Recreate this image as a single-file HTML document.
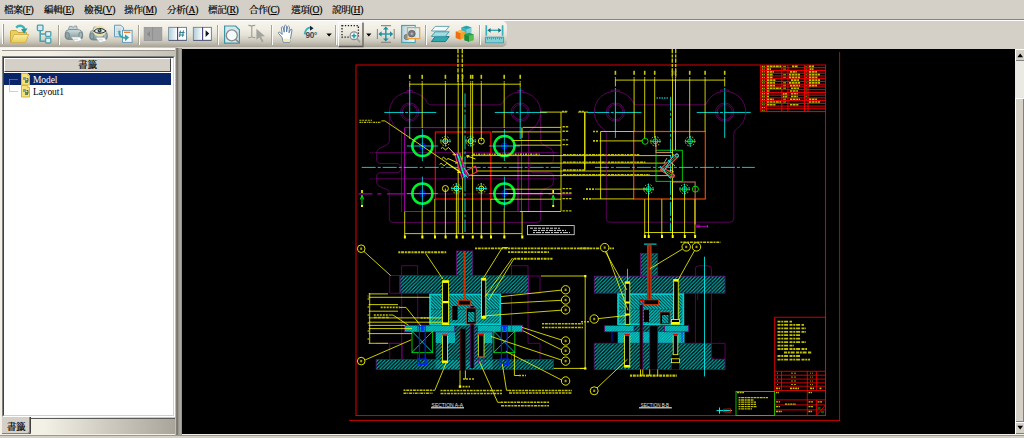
<!DOCTYPE html>
<html lang="zh-Hant"><head><meta charset="utf-8"><title>Viewer</title>
<style>
html,body{margin:0;padding:0}
body{width:1024px;height:438px;overflow:hidden;background:#d4d0c8;position:relative;font-family:"Liberation Serif","Noto Serif CJK SC",serif;font-size:12px;color:#000}
.a{position:absolute}
.mi{position:absolute;top:3px;height:14px;line-height:14px;white-space:nowrap;letter-spacing:-0.3px;font-size:9.6px;-webkit-text-stroke:0.2px #000}
.mi u{text-decoration:underline;text-underline-offset:1px}
#tb{left:0;top:21px;width:507px;height:26px;border-radius:0 5px 5px 0;background:linear-gradient(#f7f5ec 0,#f1eee4 30%,#e4e1d6 55%,#c9c5b9 80%,#a6a296 100%)}
.sep{position:absolute;top:25px;width:1px;height:20px;background:#a8a498;border-right:1px solid #fbfaf5}
#canvas{left:182px;top:49px;width:833px;height:385px;background:#000}
#lp{left:0;top:47px;width:177px;height:387px;background:linear-gradient(90deg,#f3f0e6 0,#f3f0e6 28%,#dad7cc 60%,#c4c1b6 100%)}
#tree{left:2px;top:56px;width:173px;height:361px;background:#fff;border:1px solid #808080;border-right-color:#fff;border-bottom-color:#fff;box-sizing:border-box}
#tree2{left:3px;top:57px;width:171px;height:359px;border:1px solid #404040;border-right-color:#d4d0c8;border-bottom-color:#d4d0c8;box-sizing:border-box}
#hdr{left:4px;top:58px;width:167px;height:14px;background:#d4d0c8;box-sizing:border-box;border-left:1px solid #fff;border-top:1px solid #fff;border-right:1px solid #404040;border-bottom:1px solid #404040;text-align:center;line-height:12px;font-size:9.6px;-webkit-text-stroke:0.2px #000}
#sel{left:4px;top:73px;width:167px;height:12px;background:#0a246a}
.ti{position:absolute;left:33px;height:12px;line-height:12px;font-size:9.5px;letter-spacing:-0.1px}
</style></head><body>
<!-- menu bar -->
<div class="mi" style="left:4px">檔案(<u>F</u>)</div>
<div class="mi" style="left:44px">編輯(<u>E</u>)</div>
<div class="mi" style="left:84px">檢視(<u>V</u>)</div>
<div class="mi" style="left:124px">操作(<u>M</u>)</div>
<div class="mi" style="left:167px">分析(<u>A</u>)</div>
<div class="mi" style="left:208px">標記(<u>R</u>)</div>
<div class="mi" style="left:249px">合作(<u>C</u>)</div>
<div class="mi" style="left:291px">選項(<u>O</u>)</div>
<div class="mi" style="left:332px">說明(<u>H</u>)</div>
<div class="a" style="left:0;top:19px;width:1024px;height:1px;background:#848284"></div>
<div class="a" style="left:0;top:20px;width:1024px;height:1px;background:#fff"></div>
<!-- toolbar -->
<div class="a" id="tb"></div>
<div class="a" style="left:2px;top:24px;width:1px;height:20px;background:#fff;border-right:1px solid #a09c90"></div>
<div class="sep" style="left:58px"></div><div class="sep" style="left:138px"></div><div class="sep" style="left:217px"></div>
<div class="sep" style="left:271px"></div><div class="sep" style="left:335px"></div><div class="sep" style="left:425px"></div><div class="sep" style="left:479px"></div>
<svg class="a" style="left:0;top:0" width="512" height="50" viewBox="0 0 512 50" fill="none">
<defs>
<linearGradient id="gf" x1="0" y1="0" x2="0" y2="1"><stop offset="0" stop-color="#fbeea0"/><stop offset="1" stop-color="#e8cc58"/></linearGradient>
<linearGradient id="gp" x1="0" y1="0" x2="1" y2="0"><stop offset="0" stop-color="#b4d0dc"/><stop offset="1" stop-color="#fdfeff"/></linearGradient>
<linearGradient id="gpr" x1="0" y1="0" x2="0" y2="1"><stop offset="0" stop-color="#d4e0e2"/><stop offset="1" stop-color="#78908c"/></linearGradient>
</defs>
<!-- open folder -->
<path d="M10.5 42.5V31.5q0-1 1-1h5l1.5 2h8.5v3" fill="#e9cf62" stroke="#c9a73c" stroke-width="1"/>
<path d="M10.8 42.6L14 34.5h14.6L25.6 42.6z" fill="url(#gf)" stroke="#d2b048" stroke-width="0.9"/>
<path d="M16.2 27.6C19 24.6 24 25.2 24.6 30" stroke="#3cb4b8" stroke-width="2.4" fill="none"/>
<path d="M21 29.2l6.6-1-3.4 5.6z" fill="#2a9ca4"/>
<!-- tree -->
<path d="M40.2 30.5V41.2H46M40.2 34H46" stroke="#4ca0ac" stroke-width="1.6"/>
<rect x="37.4" y="25.2" width="5.6" height="5.4" rx="0.8" fill="#d4e8f0" stroke="#4ca0ac" stroke-width="1.3"/>
<rect x="45.6" y="31.6" width="5.2" height="4.8" rx="0.8" fill="#e4f0f6" stroke="#4ca0ac" stroke-width="1.3"/>
<rect x="45.6" y="38.2" width="5.2" height="4.8" rx="0.8" fill="#e4f0f6" stroke="#4ca0ac" stroke-width="1.3"/>
<!-- printer -->
<g id="prn"><path d="M68.4 29.6l1-3.2h2.8l.8 1.2 1.4-1.6h2.2l.8 3.6z" fill="#c4d2d6" stroke="#7c9298" stroke-width="0.8"/>
<path d="M65.2 33.6q0-3.6 4-4h8.6q4.6.4 4.8 4.2v3.400q-.2 2-2.600 2.200H68q-2.600-.2-2.800-2.400z" fill="url(#gpr)" stroke="#6a8288" stroke-width="0.8"/>
<ellipse cx="67.4" cy="35.4" rx="2" ry="3.2" fill="#8ea4a8" stroke="#62787e" stroke-width="0.7"/><ellipse cx="80.600" cy="35" rx="1.800" ry="3" fill="#a4b6ba" stroke="#62787e" stroke-width="0.700"/>
<path d="M71.2 37h8.800l2 3.400-7 1.600z" fill="#fbfbfb" stroke="#b0b8bc" stroke-width="0.600"/><path d="M74 39.200h4" stroke="#b8c0c4" stroke-width="0.700"/></g>
<use href="#prn" x="24.600" y="0.600"/>
<ellipse cx="99.600" cy="31" rx="6.400" ry="5.600" fill="#f0e2b0" opacity="0.950"/>
<path d="M93.600 31.200q6-5.600 12.600-.2-6.400 4.600-12.600.2z" fill="#dfe8ea" stroke="#2c2c2c" stroke-width="1"/>
<circle cx="99.600" cy="30.800" r="2" fill="#244c50"/><path d="M98.400 28.600l1.600 2.600" stroke="#6cc0b8" stroke-width="0.900"/>
<!-- copy/convert -->
<path d="M114.500 25.200h6.400l2.600 2.600v9h-9z" fill="#dce8f0" stroke="#6c9cb4" stroke-width="1"/>
<path d="M116 29h5M116 31.500h5M116 34h4" stroke="#b8ccd8" stroke-width="0.800"/>
<rect x="122.500" y="30.400" width="9.600" height="12" fill="#f4fafc" stroke="#6c9cb4" stroke-width="1"/>
<rect x="124" y="31.600" width="6.400" height="1.400" fill="#f08030"/>
<path d="M119.400 30.600c-.6 5.400 2.200 7.600 6.600 7.200" stroke="#38a4ac" stroke-width="2" fill="none"/>
<path d="M125 34.200l4.200 3.400-4.200 3.600z" fill="#38a4ac"/>
<!-- prev (disabled) -->
<rect x="144.200" y="27.400" width="17.600" height="13" fill="#a2a2a2" stroke="#949494" stroke-width="0.800"/>
<path d="M152.600 27.400v13" stroke="#8c8c8c" stroke-width="0.900"/><path d="M150 31l-3.400 3 3.400 3z" fill="#8a8a8a"/>
<!-- page # -->
<rect x="168.700" y="27.400" width="17.800" height="13" fill="#fff" stroke="#6c8498" stroke-width="1"/>
<rect x="169.200" y="27.900" width="8" height="12" fill="url(#gp)"/>
<path d="M177.600 27v14" stroke="#46407c" stroke-width="1.100"/><path d="M169 40.400h17.400" stroke="#586078" stroke-width="1"/>
<path d="M180.400 30.600l-.8 6.400M183.400 30.400l-.8 6.400M179.200 32.600h5.400M178.800 35h5.400" stroke="#2c7c8c" stroke-width="1"/>
<!-- next -->
<rect x="193.400" y="27.400" width="18" height="13" fill="#fff" stroke="#6c8498" stroke-width="1"/>
<rect x="193.900" y="27.900" width="8.400" height="12" fill="url(#gp)"/>
<path d="M202.600 27v14" stroke="#46407c" stroke-width="1.100"/><path d="M193.600 40.400h17.600" stroke="#586078" stroke-width="1"/>
<path d="M205.600 30.200l3.600 3.400-3.600 3.400z" fill="#0c1420"/>
<!-- zoom page -->
<path d="M224.600 26h11l3.800 3.800v13.400h-14.800z" fill="#d4e8ee" stroke="#3c94a0" stroke-width="1.200"/>
<circle cx="231.800" cy="35.400" r="5.500" fill="#f4fafc" stroke="#8a8a8a" stroke-width="1.300"/>
<path d="M236 39.600l3 3" stroke="#8a8a8a" stroke-width="1.600"/>
<!-- text select (disabled) -->
<path d="M248.400 25.400q3 0 3.400 1 .4-1 3.400-1M248.400 37.600q3 0 3.400-1 .4 1 3.400 1M251.800 26.400v10.200" stroke="#9c9c98" stroke-width="1.100"/>
<path d="M256.400 28.800l8.600 7.400-4 .4 2.600 5-1.600.8-2.600-5-3 2.400z" fill="#a2a29e"/>
<!-- hand -->
<path d="M283.400 42.200l-1.400-4.800-3.400-4q-.6-1.400 1-1.200l2.600 2.200-.8-7q.6-1.400 1.800-.2l1 5 .2-6.400q1-1.400 1.900 0l.3 6.200 1-5.400q1-1.200 1.800.2l-.4 6 1.600-3.400q1.200-.8 1.400.6l-1.200 6.800-1 5.400z" fill="#fff" stroke="#5878a0" stroke-width="0.900"/>
<path d="M283.600 41.800l-.8-3h8l-.6 3z" fill="#f4ecb0"/>
<!-- 90 -->
<path d="M304.600 34.400c.6-4.400 3-6.800 6.600-7" stroke="#3cb0b8" stroke-width="1.800" fill="none"/>
<path d="M310 25.800l3.600 2.400-3.600 2.600z" fill="#14283c"/>
<text x="305.400" y="37.900" font-family="Liberation Sans, sans-serif" font-size="8.2" font-weight="bold" fill="#2c4c60" letter-spacing="-0.300">90°</text>
<path d="M326.400 33.400h5.400l-2.700 3.200z" fill="#000"/>
<!-- zoom rect button -->
<rect x="338.500" y="22.500" width="24.500" height="24" fill="none" stroke="#fff" stroke-width="1"/>
<path d="M338.500 46.500h24.500v-24" stroke="#5c5a54" stroke-width="1.400"/>
<rect x="342" y="25.600" width="16.400" height="11.600" stroke="#1c1c1c" stroke-width="1.300" stroke-dasharray="1.300 1.600"/>
<circle cx="354" cy="35.800" r="3.900" fill="#f0f8fa" stroke="#8c8c90" stroke-width="1.200"/>
<path d="M351.600 35.800h4.800M354 33.400v4.800" stroke="#20a0a8" stroke-width="1.500"/><path d="M357 38.800l3 3.400" stroke="#9c9ca0" stroke-width="1.700"/>
<path d="M366.200 33.400h5.200l-2.600 3.200z" fill="#000"/>
<!-- 4 arrows -->
<path d="M377.400 29v10M394.200 29v10M381 25.600h10M381 42.400h10" stroke="#8c8c88" stroke-width="1.100"/>
<path d="M380 34h12M385.800 28v12" stroke="#2c9cac" stroke-width="1.600"/>
<path d="M385.800 26.400l2.800 3.200h-5.600zM385.800 41.600l2.800-3.200h-5.600zM378.400 34l3.200-2.800v5.600zM393.200 34l-3.200-2.800v5.600z" fill="#208c9c"/>
<!-- overlay -->
<rect x="401.600" y="25.500" width="13.600" height="17" fill="url(#gp)" stroke="#4ca4b0" stroke-width="1.200"/>
<circle cx="406.800" cy="37" r="2.700" fill="#8c8c8c" stroke="#6c6c6c" stroke-width="0.700"/>
<rect x="407.500" y="27.600" width="12.200" height="11" fill="#d8ecf4" fill-opacity="0.800" stroke="#f0a030" stroke-width="1.200"/>
<circle cx="411.800" cy="33.700" r="3.400" fill="#7c7c80" stroke="#5c5c60" stroke-width="0.700"/><circle cx="411.800" cy="33.700" r="1.200" fill="#b4b4b8"/>
<!-- layers -->
<path d="M431.400 41.600l3.800-5h14l-3.800 5z" fill="#30a8b0" stroke="#1c7c88" stroke-width="1"/>
<path d="M431.400 36.400l3.800-4.600h14l-3.800 4.600z" fill="#a4dce4" stroke="#3c94a0" stroke-width="0.900"/>
<path d="M431.400 31l3.800-4.600h14l-3.800 4.600z" fill="#f4fafc" stroke="#5c9cac" stroke-width="0.900"/>
<!-- cubes -->
<path d="M461.400 27.600l5-1.800 5.200 1.800v5l-5.200 1.400-5-1.400z" fill="#7cd0dc"/><path d="M461.400 27.600l5-1.800 5.200 1.800-5.200 1.600z" fill="#28a4ac"/><path d="M461.400 27.600l5 1.600v5.200l-5-1.800z" fill="#3cb4c0"/>
<path d="M455.800 31.600l4.600-1.400 4.600 1.400v6.400l-4.600 1.600-4.600-1.600z" fill="#f8a028"/><path d="M455.800 31.600l4.600 1.400v6.600l-4.600-1.600z" fill="#f06c14"/><path d="M455.800 31.600l4.600-1.400 4.600 1.400-4.600 1.400z" fill="#fcb854"/>
<path d="M464.400 34.400l4.600-1.600 4.800 1.600v5.800l-4.800 1.600-4.600-1.600z" fill="#54bc50"/><path d="M464.400 34.400l4.600 1.400v6l-4.600-1.600z" fill="#1c8c3c"/><path d="M464.400 34.400l4.600-1.600 4.800 1.600-4.800 1.400z" fill="#2c9c48"/>
<!-- measure -->
<path d="M486.300 25.200v10.600M502.600 25.200v10.600" stroke="#3cb0bc" stroke-width="1.700"/>
<path d="M489 30.300h11" stroke="#30a8b4" stroke-width="1.400"/><path d="M487.400 30.300l3.200-2.400v4.800zM501.500 30.300l-3.200-2.400v4.800z" fill="#1c6c80"/>
<rect x="485.400" y="37.200" width="18.200" height="5.600" fill="#84d0d8" stroke="#3ca4b0" stroke-width="1"/>
<path d="M487.500 37.600v2M489.500 37.600v1.400M491.500 37.600v2M493.500 37.600v1.400M495.500 37.600v2M497.500 37.600v1.400M499.500 37.600v2M501.500 37.600v1.400" stroke="#2c7c8c" stroke-width="0.700"/>
</svg>

<!-- left panel -->
<div class="a" id="lp"></div>
<div class="a" style="left:0;top:48px;width:177px;height:2px;background:#fbfaf6"></div><div class="a" style="left:2px;top:50px;width:174px;height:1px;background:#9a968c"></div>
<div class="a" id="tree"></div><div class="a" id="tree2"></div>
<div class="a" id="hdr">書籤</div>
<div class="a" id="sel"></div>
<div class="ti" style="top:73.5px;color:#fff">Model</div>
<div class="ti" style="top:85.5px">Layout1</div>
<!-- tree lines + icons -->
<svg class="a" style="left:0;top:70px" width="40" height="30" viewBox="0 70 40 30">
<path d="M9.5 79.5H18M9.5 79.5V91.5H18" stroke="#a0a0a0" stroke-width="1" stroke-dasharray="1 1" fill="none"/>
<g id="pg"><path d="M21.5 73.5h6l2 2v9.5h-8z" fill="#f6e27a" stroke="#d9b23c" stroke-width="1"/><path d="M27.5 73.5v2h2" fill="#fff8c8" stroke="#d9b23c" stroke-width="0.8"/><rect x="23" y="77" width="3" height="3" fill="#7aa0b8"/><rect x="25" y="80" width="3" height="3" fill="#5a8a60"/><path d="M26.5 78.5h1.5v3" stroke="#404040" stroke-width="0.8" fill="none"/></g>
<use href="#pg" y="12"/>
</svg>
<!-- tab strip -->
<div class="a" style="left:0;top:418px;width:177px;height:16px;background:linear-gradient(90deg,#f3f0e6 0,#f3f0e6 25%,#cfcbc0 60%,#a8a49a 100%)"></div>
<div class="a" style="left:30px;top:418px;width:147px;height:1px;background:#5a5a5a"></div>
<div class="a" style="left:2px;top:417px;width:28px;height:17px;background:#d4d0c8;border-right:1px solid #404040;border-bottom:1px solid #404040;border-radius:0 0 3px 2px;box-shadow:inset -1px -1px 0 #808080;text-align:center;line-height:19px;font-size:9.6px;letter-spacing:-0.3px;-webkit-text-stroke:0.2px #000">書籤</div>
<div class="a" style="left:0;top:434px;width:1024px;height:1px;background:#f3f0e6"></div>
<div class="a" style="left:0;top:435px;width:1024px;height:1px;background:#9c988e"></div>
<div class="a" style="left:0;top:436px;width:1024px;height:2px;background:#d4d0c8"></div>
<!-- splitter -->
<div class="a" style="left:175px;top:48px;width:7px;height:387px;background:linear-gradient(90deg,#dedbd2 0,#807d75 22%,#77746c 34%,#a29f96 55%,#aeaba2 78%,#8a877f 100%)"></div>
<!-- canvas -->
<div class="a" id="canvas"></div>
<svg width="1024" height="438" viewBox="0 0 1024 438" style="position:absolute;left:0;top:0" fill="none" font-family="Liberation Sans, sans-serif"><defs>
<pattern id="h1" width="3.6" height="3.6" patternUnits="userSpaceOnUse"><path d="M-1 1L1 -1M-1 4.6L4.6 -1M2.6 4.6L4.6 2.6" stroke="#00b4b4" stroke-width="1.15"/></pattern>
<pattern id="h2" width="3.2" height="3.2" patternUnits="userSpaceOnUse"><rect width="3.2" height="3.2" fill="#003434"/><path d="M-1 -1L4.2 4.2M-1 2.2L1 4.2M2.2 -1L4.2 1" stroke="#00d4d4" stroke-width="1.2"/></pattern>
<pattern id="h2b" width="3.2" height="3.2" patternUnits="userSpaceOnUse"><rect width="3.2" height="3.2" fill="#003434"/><path d="M-1 1L1 -1M-1 4.2L4.2 -1M2.2 4.2L4.2 2.2" stroke="#00d4d4" stroke-width="1.2"/></pattern>
<pattern id="h3" width="2.6" height="2.6" patternUnits="userSpaceOnUse"><rect width="2.6" height="2.6" fill="#005050"/><path d="M-1 1L1 -1M-1 3.6L3.6 -1M1.6 3.6L3.6 1.6" stroke="#00e0e0" stroke-width="1.2"/></pattern>
</defs><rect x="356" y="65" width="469.6" height="350.6" stroke="#ff0000" stroke-width="0.88" fill="none"/>
<path d="M349 420.4L840.1 420.4" stroke="#ff0000" stroke-width="0.8"/>
<path d="M839.6 52L839.6 420.9" stroke="#ff0000" stroke-width="0.8"/>
<circle cx="409.7" cy="112.1" r="9.1" stroke="#7c007c" stroke-width="0.72" fill="none"/>
<circle cx="409.7" cy="112.1" r="7.5" stroke="#7c007c" stroke-width="0.72" fill="none"/>
<circle cx="520.2" cy="112.1" r="9.1" stroke="#7c007c" stroke-width="0.72" fill="none"/>
<circle cx="520.2" cy="112.1" r="7.5" stroke="#7c007c" stroke-width="0.72" fill="none"/>
<path d="M426.2 100.6 A20.3 20.3 0 0 0 389.3 112.3 L389.3 141 C389.3 147 376.7 146 376.7 153 L376.7 160 Q376.7 163.5 381 163.5 L396.5 163.5 A4.6 4.6 0 0 1 396.5 172.7 L381 172.7 Q376.7 172.7 376.7 176.5 L376.7 182 C376.7 189 389.3 187 389.3 193 L389.3 219 Q389.3 222.4 393 222.4 L465 222.4" stroke="#7c007c" stroke-width="0.72" fill="none"/>
<path d="M389.3 112.3 A20.3 20.3 0 0 0 393.4 124.5 Q397 129 401.5 131.5 L401.5 212" stroke="#7c007c" stroke-width="0.72" fill="none"/>
<path d="M426.2 100.6 Q427.5 104.9 431.5 104.9 L465 104.9" stroke="#7c007c" stroke-width="0.72" fill="none"/>
<path d="M406.8 92.3 L406.8 90.5 L412.3 90.5 L412.3 92.3" stroke="#7c007c" stroke-width="0.72" fill="none"/>
<path d="M503.8 100.6 A20.3 20.3 0 0 1 540.7 112.3 L540.7 141 C540.7 147 553.3 146 553.3 153 L553.3 160 Q553.3 163.5 549 163.5 L533.5 163.5 A4.6 4.6 0 0 0 533.5 172.7 L549 172.7 Q553.3 172.7 553.3 176.5 L553.3 182 C553.3 189 540.7 187 540.7 193 L540.7 219 Q540.7 222.4 537 222.4 L465 222.4" stroke="#7c007c" stroke-width="0.72" fill="none"/>
<path d="M540.7 112.3 A20.3 20.3 0 0 1 536.6 124.5 Q533 129 528.5 131.5 L528.5 212" stroke="#7c007c" stroke-width="0.72" fill="none"/>
<path d="M503.8 100.6 Q502.5 104.9 498.5 104.9 L465 104.9" stroke="#7c007c" stroke-width="0.72" fill="none"/>
<path d="M523.2 92.3 L523.2 90.5 L517.7 90.5 L517.7 92.3" stroke="#7c007c" stroke-width="0.72" fill="none"/>
<path d="M369.8 152.6L560.2 152.6" stroke="#7c007c" stroke-width="0.72" stroke-dasharray="1 1.5 1 1.5 182 1.5 1 1.5 1 0"/>
<path d="M369.8 178.8L560.2 178.8" stroke="#7c007c" stroke-width="0.72" stroke-dasharray="1 1.5 1 1.5 182 1.5 1 1.5 1 0"/>
<path d="M358.4 193.9L404 193.9" stroke="#a000a0" stroke-width="1.44" stroke-dasharray="14 5 4 5.6 20 0"/>
<path d="M521 193.9L571.6 193.9" stroke="#a000a0" stroke-width="1.44" stroke-dasharray="22 5.6 4 5 14 0"/>
<path d="M404 193.9L521 193.9" stroke="#7c007c" stroke-width="0.64"/>
<rect x="404.7" y="127.7" width="116.7" height="83.8" stroke="#d000d0" stroke-width="0.8" fill="none"/>
<path d="M518 155.6L518 211.5" stroke="#d000d0" stroke-width="0.8"/>
<rect x="435.3" y="132" width="55.5" height="67" stroke="#ff0000" stroke-width="1.12" fill="none"/>
<path d="M361.7 167.4L560 167.4" stroke="#00ffff" stroke-width="0.8" stroke-dasharray="14 2 3 2"/>
<path d="M465 93.4L465 232" stroke="#00ffff" stroke-width="0.8" stroke-dasharray="14 2 3 2"/>
<path d="M384.3 112.45L436.3 112.45" stroke="#00ffff" stroke-width="0.8" stroke-dasharray="19.5 1.3 3 1.3 40 0"/>
<path d="M409.7 87.7L409.7 139" stroke="#00ffff" stroke-width="0.8"/>
<path d="M494.8 112.45L546.8 112.45" stroke="#00ffff" stroke-width="0.8" stroke-dasharray="19.5 1.3 3 1.3 40 0"/>
<path d="M520.2 87.7L520.2 139" stroke="#00ffff" stroke-width="0.8"/>
<circle cx="422.4" cy="146" r="10.1" stroke="#00f030" stroke-width="2.5" fill="none"/>
<circle cx="422.4" cy="146" r="2.8" stroke="#0000ff" stroke-width="1.04" fill="none"/>
<circle cx="422.4" cy="146" r="1.2" stroke="#0000ff" stroke-width="0.96" fill="none"/>
<path d="M406.9 146L437.9 146" stroke="#00ffff" stroke-width="0.72"/>
<path d="M422.4 129L422.4 161" stroke="#00ffff" stroke-width="0.72"/>
<circle cx="422.4" cy="193.6" r="10.1" stroke="#00f030" stroke-width="2.5" fill="none"/>
<circle cx="422.4" cy="193.6" r="2.8" stroke="#0000ff" stroke-width="1.04" fill="none"/>
<circle cx="422.4" cy="193.6" r="1.2" stroke="#0000ff" stroke-width="0.96" fill="none"/>
<path d="M406.9 193.6L437.9 193.6" stroke="#00ffff" stroke-width="0.72"/>
<path d="M422.4 176.6L422.4 208.6" stroke="#00ffff" stroke-width="0.72"/>
<circle cx="504.4" cy="146" r="10.1" stroke="#00f030" stroke-width="2.5" fill="none"/>
<circle cx="504.4" cy="146" r="2.8" stroke="#0000ff" stroke-width="1.04" fill="none"/>
<circle cx="504.4" cy="146" r="1.2" stroke="#0000ff" stroke-width="0.96" fill="none"/>
<path d="M488.9 146L519.9 146" stroke="#00ffff" stroke-width="0.72"/>
<path d="M504.4 129L504.4 161" stroke="#00ffff" stroke-width="0.72"/>
<circle cx="504.4" cy="193.6" r="10.1" stroke="#00f030" stroke-width="2.5" fill="none"/>
<circle cx="504.4" cy="193.6" r="2.8" stroke="#0000ff" stroke-width="1.04" fill="none"/>
<circle cx="504.4" cy="193.6" r="1.2" stroke="#0000ff" stroke-width="0.96" fill="none"/>
<path d="M488.9 193.6L519.9 193.6" stroke="#00ffff" stroke-width="0.72"/>
<path d="M504.4 176.6L504.4 208.6" stroke="#00ffff" stroke-width="0.72"/>
<path d="M409.7 84.2L520.2 84.2" stroke="#ffff00" stroke-width="0.8"/>
<path d="M409.7 82.4L409.7 87.5" stroke="#ffff00" stroke-width="0.8"/>
<rect x="408.9" y="74.8" width="1.6" height="4" fill="#c8c800"/>
<rect x="409.1" y="81" width="1.2" height="1" fill="#a0a000"/>
<path d="M422.2 82.4L422.2 128" stroke="#ffff00" stroke-width="0.8"/>
<rect x="421.4" y="74.8" width="1.6" height="4" fill="#c8c800"/>
<rect x="421.6" y="81" width="1.2" height="1" fill="#a0a000"/>
<path d="M445.4 82.4L445.4 141.1" stroke="#ffff00" stroke-width="0.8"/>
<rect x="444.6" y="74.8" width="1.6" height="4" fill="#c8c800"/>
<rect x="444.8" y="81" width="1.2" height="1" fill="#a0a000"/>
<path d="M458.2 82.4L458.2 233.6" stroke="#ffff00" stroke-width="0.8"/>
<rect x="457.4" y="74.8" width="1.6" height="4" fill="#c8c800"/>
<rect x="457.6" y="81" width="1.2" height="1" fill="#a0a000"/>
<path d="M462.6 82.4L462.6 233.6" stroke="#ffff00" stroke-width="0.8"/>
<rect x="461.8" y="74.8" width="1.6" height="4" fill="#c8c800"/>
<rect x="462" y="81" width="1.2" height="1" fill="#a0a000"/>
<path d="M470.7 82.4L470.7 141.1" stroke="#ffff00" stroke-width="0.8"/>
<rect x="469.9" y="74.8" width="1.6" height="4" fill="#c8c800"/>
<rect x="470.1" y="81" width="1.2" height="1" fill="#a0a000"/>
<path d="M472.6 82.4L472.6 233.6" stroke="#ffff00" stroke-width="0.8"/>
<rect x="471.8" y="74.8" width="1.6" height="4" fill="#c8c800"/>
<rect x="472" y="81" width="1.2" height="1" fill="#a0a000"/>
<path d="M481.3 82.4L481.3 141.1" stroke="#ffff00" stroke-width="0.8"/>
<rect x="480.5" y="74.8" width="1.6" height="4" fill="#c8c800"/>
<rect x="480.7" y="81" width="1.2" height="1" fill="#a0a000"/>
<path d="M504.2 82.4L504.2 128" stroke="#ffff00" stroke-width="0.8"/>
<rect x="503.4" y="74.8" width="1.6" height="4" fill="#c8c800"/>
<rect x="503.6" y="81" width="1.2" height="1" fill="#a0a000"/>
<path d="M520.2 82.4L520.2 87.5" stroke="#ffff00" stroke-width="0.8"/>
<rect x="519.4" y="74.8" width="1.6" height="4" fill="#c8c800"/>
<rect x="519.6" y="81" width="1.2" height="1" fill="#a0a000"/>
<path d="M458 49L458 82.2" stroke="#c4c400" stroke-width="1.42" stroke-dasharray="4.2 1.3 3 1.1"/>
<path d="M462.3 49L462.3 82.2" stroke="#c4c400" stroke-width="1.42" stroke-dasharray="4.2 1.3 3 1.1"/>
<path d="M404.7 233.6L522.1 233.6" stroke="#ffff00" stroke-width="0.8"/>
<path d="M404.7 211.5L404.7 238" stroke="#ffff00" stroke-width="0.8"/>
<path d="M422.2 208.5L422.2 238" stroke="#ffff00" stroke-width="0.8"/>
<path d="M504.2 208.5L504.2 238" stroke="#ffff00" stroke-width="0.8"/>
<path d="M434.8 199L434.8 238" stroke="#ffff00" stroke-width="0.8"/>
<path d="M445.4 188.5L445.4 238" stroke="#ffff00" stroke-width="0.8"/>
<path d="M456.4 188.5L456.4 238" stroke="#ffff00" stroke-width="0.8"/>
<path d="M481.3 188.5L481.3 238" stroke="#ffff00" stroke-width="0.8"/>
<path d="M490.8 199L490.8 238" stroke="#ffff00" stroke-width="0.8"/>
<path d="M522.1 211.5L522.1 238" stroke="#ffff00" stroke-width="0.8"/>
<rect x="403.9" y="235.5" width="2" height="3" fill="#ffff00"/>
<rect x="421.4" y="235.5" width="2" height="3" fill="#ffff00"/>
<rect x="434" y="235.5" width="2" height="3" fill="#ffff00"/>
<rect x="444.6" y="235.5" width="2" height="3" fill="#ffff00"/>
<rect x="455.6" y="235.5" width="2" height="3" fill="#ffff00"/>
<rect x="461.8" y="235.5" width="2" height="3" fill="#ffff00"/>
<rect x="471.8" y="235.5" width="2" height="3" fill="#ffff00"/>
<rect x="480.5" y="235.5" width="2" height="3" fill="#ffff00"/>
<rect x="490" y="235.5" width="2" height="3" fill="#ffff00"/>
<rect x="503.4" y="235.5" width="2" height="3" fill="#ffff00"/>
<rect x="521.3" y="235.5" width="2" height="3" fill="#ffff00"/>
<path d="M561 112.1L561 211.5" stroke="#ffff00" stroke-width="0.8"/>
<path d="M584.6 112.1L584.6 171" stroke="#ffff00" stroke-width="0.8"/>
<path d="M540 112.1L567 112.1" stroke="#ffff00" stroke-width="0.8"/>
<path d="M578 112.1L588 112.1" stroke="#ffff00" stroke-width="0.8"/>
<path d="M562 111.3L568 111.3" stroke="#c0c000" stroke-width="1.28" stroke-dasharray="2 0.8"/>
<path d="M579 111.3L584 111.3" stroke="#c0c000" stroke-width="1.28" stroke-dasharray="2 0.8"/>
<path d="M522.8 127.4L561 127.4" stroke="#ffff00" stroke-width="0.8"/>
<path d="M492 131.9L561 131.9" stroke="#ffff00" stroke-width="0.8"/>
<path d="M512.5 140.5L561 140.5" stroke="#ffff00" stroke-width="0.8"/>
<path d="M515 145.2L561 145.2" stroke="#ffff00" stroke-width="0.8"/>
<path d="M471.4 155.6L561 155.6" stroke="#ffff00" stroke-width="0.8"/>
<path d="M455 163.1L561 163.1" stroke="#ffff00" stroke-width="0.8"/>
<path d="M476 171L561 171" stroke="#ffff00" stroke-width="0.8"/>
<path d="M470 175.6L561 175.6" stroke="#ffff00" stroke-width="0.8"/>
<path d="M504.6 189.2L561 189.2" stroke="#ffff00" stroke-width="0.8"/>
<path d="M504.6 193.6L561 193.6" stroke="#ffff00" stroke-width="0.8"/>
<path d="M490.8 199.2L561 199.2" stroke="#ffff00" stroke-width="0.8"/>
<path d="M520 211.5L561 211.5" stroke="#ffff00" stroke-width="0.8"/>
<path d="M562.5 126.8L569 126.8" stroke="#c0c000" stroke-width="1.44" stroke-dasharray="2.4 0.9"/>
<path d="M562.5 131.3L569 131.3" stroke="#c0c000" stroke-width="1.44" stroke-dasharray="2.4 0.9"/>
<path d="M562.5 139.9L569 139.9" stroke="#c0c000" stroke-width="1.44" stroke-dasharray="2.4 0.9"/>
<path d="M562.5 144.6L569 144.6" stroke="#c0c000" stroke-width="1.44" stroke-dasharray="2.4 0.9"/>
<path d="M562.5 188.6L572 188.6" stroke="#c0c000" stroke-width="1.44" stroke-dasharray="2.4 0.9"/>
<path d="M562.5 193L572 193" stroke="#c0c000" stroke-width="1.44" stroke-dasharray="2.4 0.9"/>
<path d="M562.5 198.6L572 198.6" stroke="#c0c000" stroke-width="1.44" stroke-dasharray="2.4 0.9"/>
<path d="M562.5 210.9L572 210.9" stroke="#c0c000" stroke-width="1.44" stroke-dasharray="2.4 0.9"/>
<path d="M561 155.6L671 155.6" stroke="#ffff00" stroke-width="0.8"/>
<path d="M563 154.7L640 154.7" stroke="#c0c000" stroke-width="1.6" stroke-dasharray="3.2 0.8 1.6 0.8 2.4 0.8"/>
<path d="M561 163.1L671 163.1" stroke="#ffff00" stroke-width="0.8"/>
<path d="M563 162.2L646 162.2" stroke="#c0c000" stroke-width="1.6" stroke-dasharray="3.2 0.8 1.6 0.8 2.4 0.8"/>
<path d="M561 171L671 171" stroke="#ffff00" stroke-width="0.8"/>
<path d="M563 170.1L585 170.1" stroke="#c0c000" stroke-width="1.6" stroke-dasharray="3.2 0.8 1.6 0.8 2.4 0.8"/>
<path d="M561 175.6L671 175.6" stroke="#ffff00" stroke-width="0.8"/>
<path d="M563 174.7L650 174.7" stroke="#c0c000" stroke-width="1.6" stroke-dasharray="3.2 0.8 1.6 0.8 2.4 0.8"/>
<path d="M522.1 127.6L522.1 137.9" stroke="#ffff00" stroke-width="0.8"/>
<path d="M473 154.3L540 154.3" stroke="#c0c000" stroke-width="1.76" stroke-dasharray="2 1.2 1 1"/>
<circle cx="445.4" cy="141.1" r="2.5" stroke="#ffff00" stroke-width="0.96" fill="none"/>
<circle cx="445.4" cy="141.1" r="4.7" stroke="#e0e000" stroke-width="0.9" stroke-dasharray="1.4 1.55" fill="none"/>
<path d="M439.9 141.1L450.9 141.1" stroke="#00ffff" stroke-width="0.8"/>
<path d="M445.4 135.6L445.4 146.6" stroke="#00ffff" stroke-width="0.8"/>
<circle cx="470.7" cy="141.1" r="2.5" stroke="#ffff00" stroke-width="0.96" fill="none"/>
<circle cx="470.7" cy="141.1" r="4.7" stroke="#e0e000" stroke-width="0.9" stroke-dasharray="1.4 1.55" fill="none"/>
<path d="M465.2 141.1L476.2 141.1" stroke="#00ffff" stroke-width="0.8"/>
<path d="M470.7 135.6L470.7 146.6" stroke="#00ffff" stroke-width="0.8"/>
<circle cx="481.3" cy="141.1" r="3" stroke="#ffff00" stroke-width="0.88" fill="none"/>
<circle cx="445.4" cy="188.5" r="3" stroke="#ffff00" stroke-width="0.88" fill="none"/>
<circle cx="456.4" cy="188.5" r="2.5" stroke="#ffff00" stroke-width="0.96" fill="none"/>
<circle cx="456.4" cy="188.5" r="4.7" stroke="#e0e000" stroke-width="0.9" stroke-dasharray="1.4 1.55" fill="none"/>
<path d="M450.9 188.5L461.9 188.5" stroke="#00ffff" stroke-width="0.8"/>
<path d="M456.4 183L456.4 194" stroke="#00ffff" stroke-width="0.8"/>
<circle cx="481.3" cy="188.5" r="2.5" stroke="#ffff00" stroke-width="0.96" fill="none"/>
<circle cx="481.3" cy="188.5" r="4.7" stroke="#e0e000" stroke-width="0.9" stroke-dasharray="1.4 1.55" fill="none"/>
<path d="M475.8 188.5L486.8 188.5" stroke="#00ffff" stroke-width="0.8"/>
<path d="M481.3 183L481.3 194" stroke="#00ffff" stroke-width="0.8"/>
<path d="M359.4 120.2L372 120.2" stroke="#c0c000" stroke-width="1.12" stroke-dasharray="2 0.8"/>
<path d="M359.4 122.4L381 122.4" stroke="#c0c000" stroke-width="1.12" stroke-dasharray="2 0.8 1 0.8"/>
<path d="M381.4 120.9 L384.9 120.9 L460 171.6" stroke="#ffff00" stroke-width="0.8" fill="none"/>
<path d="M457.2 153.5L464.6 177.5" stroke="#f02868" stroke-width="6.4" stroke-linecap="butt"/>
<path d="M457.4 154.2L464.4 176.8" stroke="#000" stroke-width="3.8"/>
<path d="M456.2 153 L463.8 178 M458.6 153 L466 177" stroke="#ff00ff" stroke-width="0.72" fill="none"/>
<path d="M457.4 154 L464.6 177" stroke="#00ffff" stroke-width="1.28" fill="none"/>
<path d="M459 158 L462.5 170 M460.5 156 L462 160" stroke="#00f000" stroke-width="1.04" fill="none"/>
<path d="M466.5 170.5 L475.5 166.3 L477.2 171.8 L468.5 176 Z" stroke="#f02868" stroke-width="1.12" fill="none"/>
<path d="M462 172 L468 178 M464 168 L470 176" stroke="#00ffff" stroke-width="0.8" fill="none"/>
<path d="M441 148.6 q1.5 -2.5 3 0 t3 0 t3 0.5 L455.6 155 M453.2 152.6 L455.6 155 L452.6 154.6" stroke="#ffff00" stroke-width="0.88" fill="none"/>
<path d="M439.6 164.5 q1.5 -2.5 3 0 t3 0 t3 0 L460.4 172.5 M457.6 170.4 L460.4 172.5 L457.2 172.4" stroke="#ffff00" stroke-width="0.88" fill="none"/>
<path d="M442 158.5 q1.5 -2.5 3 0 t3 0 L458 163" stroke="#ffff00" stroke-width="0.88" fill="none"/>
<path d="M466.7 155.8 L475.5 159 M468 158 L466.7 155.8 L469.4 155.4" stroke="#ffff00" stroke-width="0.88" fill="none"/>
<path d="M362 205.5 L362 196 M360.4 199.5 L362 195 L363.6 199.5" stroke="#00ff20" stroke-width="0.88" fill="none"/>
<rect x="361.2" y="190" width="1.6" height="3" fill="#ffff00"/>
<rect x="361" y="205" width="2" height="2" fill="#ffff00"/>
<path d="M553.2 205.5 L553.2 196 M551.6 199.5 L553.2 195 L554.8 199.5" stroke="#00ff20" stroke-width="0.88" fill="none"/>
<rect x="552.4" y="190" width="1.6" height="3" fill="#ffff00"/>
<rect x="552.2" y="205" width="2" height="2" fill="#ffff00"/>
<rect x="527.4" y="225.6" width="46.8" height="9.1" stroke="#e0e0e0" stroke-width="0.8" fill="none"/>
<path d="M530 228.2L560 228.2" stroke="#e0e0e0" stroke-width="0.96" stroke-dasharray="3 1"/>
<path d="M533 230.4L566 230.4" stroke="#e0e0e0" stroke-width="0.96" stroke-dasharray="4 1 2 1"/>
<path d="M533 232.6L570 232.6" stroke="#e0e0e0" stroke-width="0.96" stroke-dasharray="2 1 5 1"/>
<circle cx="615.4" cy="112.1" r="9.1" stroke="#7c007c" stroke-width="0.72" fill="none"/>
<circle cx="615.4" cy="112.1" r="7.5" stroke="#7c007c" stroke-width="0.72" fill="none"/>
<path d="M587.4 112.45L641.4 112.45" stroke="#00ffff" stroke-width="0.8" stroke-dasharray="22 1.3 3 1.3 40 0"/>
<path d="M615.4 88L615.4 137.9" stroke="#00ffff" stroke-width="0.8"/>
<circle cx="724.7" cy="112.1" r="9.1" stroke="#7c007c" stroke-width="0.72" fill="none"/>
<circle cx="724.7" cy="112.1" r="7.5" stroke="#7c007c" stroke-width="0.72" fill="none"/>
<path d="M696.7 112.45L750.7 112.45" stroke="#00ffff" stroke-width="0.8" stroke-dasharray="22 1.3 3 1.3 40 0"/>
<path d="M724.7 88L724.7 137.9" stroke="#00ffff" stroke-width="0.8"/>
<path d="M636 104.8 L704 104.8" stroke="#7c007c" stroke-width="0.72" fill="none"/>
<path d="M636 104.8 Q633.5 104.8 633 102 A20.6 20.6 0 1 0 603.5 129 Q606.3 131 606.3 134 L606.3 218.8 Q606.3 222.2 609.8 222.2 L730 222.2 Q733.8 222.2 733.8 218.5 L733.8 134 Q733.8 131 736.5 129 A20.6 20.6 0 1 0 707 102 Q706.5 104.8 704 104.8" stroke="#7c007c" stroke-width="0.72" fill="none"/>
<path d="M611.2 91.5 L611.2 90 L619.6 90 L619.6 91.5" stroke="#7c007c" stroke-width="0.72" fill="none"/>
<path d="M720.5 91.5 L720.5 90 L728.9 90 L728.9 91.5" stroke="#7c007c" stroke-width="0.72" fill="none"/>
<rect x="633.7" y="131.5" width="71.6" height="67.5" stroke="#e84800" stroke-width="1.2" fill="none"/>
<rect x="656" y="150.2" width="26.3" height="31.1" stroke="#00f000" stroke-width="0.8" fill="none"/>
<path d="M656 142 L656 152.6 L672.7 152.6" stroke="#d07868" stroke-width="1.04" fill="none"/>
<path d="M672.7 182.1 L695.1 182.1 L695.1 224.5" stroke="#d07868" stroke-width="1.04" fill="none"/>
<path d="M594.9 167.4L754.8 167.4" stroke="#00ffff" stroke-width="0.8" stroke-dasharray="14 2 3 2"/>
<path d="M670.6 96.8L670.6 231.3" stroke="#00ffff" stroke-width="0.8" stroke-dasharray="14 2 3 2"/>
<path d="M656.5 98L668 98" stroke="#00ffff" stroke-width="1.12" stroke-dasharray="1.5 1"/>
<path d="M615.4 80.1L724.7 80.1" stroke="#ffff00" stroke-width="0.8"/>
<path d="M615.4 78.3L615.4 86.5" stroke="#ffff00" stroke-width="0.8"/>
<rect x="614.6" y="70.8" width="1.6" height="4" fill="#c8c800"/>
<rect x="614.8" y="77" width="1.2" height="1" fill="#a0a000"/>
<path d="M634.1 78.3L634.1 131.5" stroke="#ffff00" stroke-width="0.8"/>
<rect x="633.3" y="70.8" width="1.6" height="4" fill="#c8c800"/>
<rect x="633.5" y="77" width="1.2" height="1" fill="#a0a000"/>
<path d="M644.7 78.3L644.7 138" stroke="#ffff00" stroke-width="0.8"/>
<rect x="643.9" y="70.8" width="1.6" height="4" fill="#c8c800"/>
<rect x="644.1" y="77" width="1.2" height="1" fill="#a0a000"/>
<path d="M654.7 78.3L654.7 138" stroke="#ffff00" stroke-width="0.8"/>
<rect x="653.9" y="70.8" width="1.6" height="4" fill="#c8c800"/>
<rect x="654.1" y="77" width="1.2" height="1" fill="#a0a000"/>
<path d="M672.5 78.3L672.5 236" stroke="#ffff00" stroke-width="0.8"/>
<rect x="671.7" y="70.8" width="1.6" height="4" fill="#c8c800"/>
<rect x="671.9" y="77" width="1.2" height="1" fill="#a0a000"/>
<path d="M675.5 78.3L675.5 150" stroke="#ffff00" stroke-width="0.8"/>
<rect x="674.7" y="70.8" width="1.6" height="4" fill="#c8c800"/>
<rect x="674.9" y="77" width="1.2" height="1" fill="#a0a000"/>
<path d="M689.7 78.3L689.7 138" stroke="#ffff00" stroke-width="0.8"/>
<rect x="688.9" y="70.8" width="1.6" height="4" fill="#c8c800"/>
<rect x="689.1" y="77" width="1.2" height="1" fill="#a0a000"/>
<path d="M705.1 78.3L705.1 131.5" stroke="#ffff00" stroke-width="0.8"/>
<rect x="704.3" y="70.8" width="1.6" height="4" fill="#c8c800"/>
<rect x="704.5" y="77" width="1.2" height="1" fill="#a0a000"/>
<path d="M724.7 78.3L724.7 86.5" stroke="#ffff00" stroke-width="0.8"/>
<rect x="723.9" y="70.8" width="1.6" height="4" fill="#c8c800"/>
<rect x="724.1" y="77" width="1.2" height="1" fill="#a0a000"/>
<path d="M672.3 49L672.3 78" stroke="#c4c400" stroke-width="1.42" stroke-dasharray="4.2 1.3 3 1.1"/>
<path d="M675.7 49L675.7 78" stroke="#c4c400" stroke-width="1.42" stroke-dasharray="4.2 1.3 3 1.1"/>
<path d="M585 112.1L585 169.7" stroke="#ffff00" stroke-width="0.8"/>
<path d="M600.6 131.5L600.6 198.9" stroke="#ffff00" stroke-width="0.8"/>
<path d="M600.6 131.5L633.7 131.5" stroke="#ffff00" stroke-width="0.8"/>
<path d="M599.4 140.9L642.8 140.9" stroke="#ffff00" stroke-width="0.8"/>
<path d="M593 131.5L599 131.5" stroke="#c0c000" stroke-width="1.6" stroke-dasharray="2 1"/>
<path d="M593 140.9L599 140.9" stroke="#c0c000" stroke-width="1.6" stroke-dasharray="2 1"/>
<path d="M594.9 189.1L648.5 189.1" stroke="#ffff00" stroke-width="0.8"/>
<path d="M591.4 198.9L633.7 198.9" stroke="#ffff00" stroke-width="0.8"/>
<path d="M586 189.1L594 189.1" stroke="#c0c000" stroke-width="1.6" stroke-dasharray="2 1"/>
<path d="M583 198.9L591 198.9" stroke="#c0c000" stroke-width="1.6" stroke-dasharray="2 1"/>
<path d="M644.7 232.5L694.9 232.5" stroke="#ffff00" stroke-width="0.8"/>
<path d="M644.7 199.2L644.7 236" stroke="#ffff00" stroke-width="0.8"/>
<rect x="643.9" y="235" width="2" height="3" fill="#ffff00"/>
<path d="M648.5 192L648.5 236" stroke="#ffff00" stroke-width="0.8"/>
<rect x="647.7" y="235" width="2" height="3" fill="#ffff00"/>
<path d="M661.8 199.2L661.8 236" stroke="#ffff00" stroke-width="0.8"/>
<rect x="661" y="235" width="2" height="3" fill="#ffff00"/>
<path d="M672.5 182L672.5 236" stroke="#ffff00" stroke-width="0.8"/>
<rect x="671.7" y="235" width="2" height="3" fill="#ffff00"/>
<path d="M684.6 192L684.6 236" stroke="#ffff00" stroke-width="0.8"/>
<rect x="683.8" y="235" width="2" height="3" fill="#ffff00"/>
<path d="M694.9 199.2L694.9 236" stroke="#ffff00" stroke-width="0.8"/>
<rect x="694.1" y="235" width="2" height="3" fill="#ffff00"/>
<circle cx="645.1" cy="141.3" r="3" stroke="#00f000" stroke-width="0.88" fill="none"/>
<circle cx="655.4" cy="141.3" r="2.5" stroke="#00f000" stroke-width="0.96" fill="none"/>
<circle cx="655.4" cy="141.3" r="4.7" stroke="#e0e000" stroke-width="0.9" stroke-dasharray="1.4 1.55" fill="none"/>
<path d="M649.9 141.3L660.9 141.3" stroke="#00ffff" stroke-width="0.8"/>
<path d="M655.4 135.8L655.4 146.8" stroke="#00ffff" stroke-width="0.8"/>
<circle cx="690.1" cy="141.3" r="2.5" stroke="#00f000" stroke-width="0.96" fill="none"/>
<circle cx="690.1" cy="141.3" r="4.7" stroke="#e0e000" stroke-width="0.9" stroke-dasharray="1.4 1.55" fill="none"/>
<path d="M684.6 141.3L695.6 141.3" stroke="#00ffff" stroke-width="0.8"/>
<path d="M690.1 135.8L690.1 146.8" stroke="#00ffff" stroke-width="0.8"/>
<circle cx="648.5" cy="189.1" r="2.5" stroke="#00f000" stroke-width="0.96" fill="none"/>
<circle cx="648.5" cy="189.1" r="4.7" stroke="#e0e000" stroke-width="0.9" stroke-dasharray="1.4 1.55" fill="none"/>
<path d="M643 189.1L654 189.1" stroke="#00ffff" stroke-width="0.8"/>
<path d="M648.5 183.6L648.5 194.6" stroke="#00ffff" stroke-width="0.8"/>
<circle cx="684.6" cy="189.1" r="2.5" stroke="#00f000" stroke-width="0.96" fill="none"/>
<circle cx="684.6" cy="189.1" r="4.7" stroke="#e0e000" stroke-width="0.9" stroke-dasharray="1.4 1.55" fill="none"/>
<path d="M679.1 189.1L690.1 189.1" stroke="#00ffff" stroke-width="0.8"/>
<path d="M684.6 183.6L684.6 194.6" stroke="#00ffff" stroke-width="0.8"/>
<circle cx="695.4" cy="189.1" r="3" stroke="#00f000" stroke-width="0.88" fill="none"/>
<path d="M676.7 155.8L662.4 169.3L672.7 175.7" stroke="#e04848" stroke-width="4.6" stroke-linecap="round" stroke-linejoin="round"/>
<path d="M676.7 155.8L662.4 169.3L672.7 175.7" stroke="#000" stroke-width="2.2" stroke-linecap="round" stroke-linejoin="round"/>
<path d="M676.7 155.8 L662.4 169.3 L672.7 175.7" stroke="#00f000" stroke-width="0.88" fill="none"/>
<path d="M674 154 L664 171 M668 160 L675 166 M660 166 L670 178" stroke="#00ffff" stroke-width="0.88" fill="none"/>
<circle cx="676.9" cy="155.6" r="1.6" stroke="#00ffff" stroke-width="0.8" fill="none"/>
<circle cx="662.6" cy="169.3" r="1.4" stroke="#d07868" stroke-width="0.96" fill="none"/>
<circle cx="672.5" cy="175.5" r="1.3" stroke="#d07868" stroke-width="0.96" fill="none"/>
<path d="M667 158 L664 163 M670 170 L674 172" stroke="#e0e0e0" stroke-width="0.72" fill="none"/>
<path d="M696.5 226.3 L708 226.3 M697 224.5 L697 228 M699 224.5 L699 228 M707.5 225 L707.5 227.6" stroke="#ff00ff" stroke-width="0.72" fill="none"/>
<rect x="399.9" y="275.6" width="128.6" height="17.6" fill="url(#h1)"/>
<rect x="456.5" y="251" width="16.3" height="24.6" fill="url(#h1)"/>
<rect x="429.1" y="293.6" width="72" height="15.9" fill="url(#h2)"/>
<rect x="429.1" y="309.5" width="72" height="15.8" fill="url(#h2b)"/>
<rect x="404.4" y="325.2" width="50.4" height="6.7" fill="url(#h3)"/>
<rect x="477.5" y="325.2" width="44.9" height="6.7" fill="url(#h3)"/>
<rect x="454.8" y="325.2" width="22.7" height="6.7" fill="url(#h1)"/>
<rect x="435.6" y="331.9" width="19.4" height="11.1" fill="url(#h3)"/>
<rect x="477.5" y="331.9" width="15" height="11.1" fill="url(#h3)"/>
<rect x="455" y="331.9" width="22.5" height="11.1" fill="url(#h1)"/>
<rect x="435.6" y="343" width="56.9" height="26.5" fill="url(#h1)"/>
<rect x="376.1" y="359.4" width="177.6" height="10.1" fill="url(#h1)"/>
<rect x="399.9" y="275.6" width="128.6" height="17.6" stroke="#7c007c" stroke-width="0.72" fill="none"/>
<rect x="456.5" y="251" width="16.3" height="24.6" stroke="#7c007c" stroke-width="0.72" fill="none"/>
<rect x="376.1" y="359.4" width="177.6" height="10.1" stroke="#7c007c" stroke-width="0.72" fill="none"/>
<rect x="404.4" y="325.2" width="50.4" height="6.7" stroke="#7c007c" stroke-width="0.72" fill="none"/>
<rect x="477.5" y="325.2" width="44.9" height="6.7" stroke="#7c007c" stroke-width="0.72" fill="none"/>
<rect x="430.1" y="294.5" width="70.2" height="29.8" stroke="#00cccc" stroke-width="1.6" fill="none"/>
<rect x="401.7" y="265.8" width="16" height="9.8" stroke="#7c007c" stroke-width="0.72" fill="none"/>
<path d="M401.7 293.2L401.7 359.4" stroke="#7c007c" stroke-width="0.72"/>
<path d="M417.7 293.2L417.7 359.4" stroke="#7c007c" stroke-width="0.72"/>
<rect x="389.8" y="275.6" width="10.1" height="17.6" stroke="#7c007c" stroke-width="0.72" fill="none"/>
<rect x="389.8" y="343.3" width="12.3" height="16.1" stroke="#7c007c" stroke-width="0.72" fill="none"/>
<rect x="511.4" y="265.8" width="16.6" height="9.8" stroke="#7c007c" stroke-width="0.72" fill="none"/>
<path d="M511.4 293.2L511.4 359.4" stroke="#7c007c" stroke-width="0.72"/>
<path d="M528 293.2L528 343.3" stroke="#7c007c" stroke-width="0.72"/>
<rect x="528.5" y="276" width="11.5" height="17.2" stroke="#7c007c" stroke-width="0.72" fill="none"/>
<path d="M528 343.3 L540 343.3 L540 359.4" stroke="#7c007c" stroke-width="0.72" fill="none"/>
<path d="M376.1 343.3L402 343.3" stroke="#7c007c" stroke-width="0.72"/>
<rect x="463.6" y="251" width="2" height="51" fill="#d03000"/>
<rect x="458.4" y="300.3" width="11.8" height="4.7" stroke="#d03000" stroke-width="0.88" fill="#000"/>
<rect x="460.2" y="328.8" width="5.4" height="41.7" fill="#000"/>
<path d="M460.2 328.8L460.2 370.5" stroke="#900000" stroke-width="0.72"/>
<path d="M465.6 328.8L465.6 370.5" stroke="#900000" stroke-width="0.72"/>
<rect x="470.3" y="306" width="3.7" height="62" fill="#000"/>
<path d="M470.3 306L470.3 368" stroke="#7c007c" stroke-width="0.72"/>
<path d="M474 306L474 368" stroke="#7c007c" stroke-width="0.72"/>
<rect x="466.5" y="308" width="9.5" height="16" fill="#000"/>
<rect x="466.5" y="308" width="9.5" height="16" stroke="#b05030" stroke-width="0.72" fill="none"/>
<rect x="468" y="312" width="6.5" height="10" fill="url(#h2)"/>
<rect x="452" y="306" width="5.5" height="14" fill="#000"/>
<path d="M452 306L452 320" stroke="#b05030" stroke-width="0.72"/>
<rect x="442.6" y="280.7" width="6" height="43.9" fill="#000"/>
<rect x="442.6" y="280.7" width="6" height="43.9" stroke="#ffff00" stroke-width="0.8" fill="none"/>
<rect x="442.6" y="280.7" width="6" height="2.2" fill="#ffff00"/>
<rect x="442.6" y="301" width="6" height="2.2" fill="#ffff00"/>
<rect x="442.6" y="322.4" width="6" height="2.2" fill="#ffff00"/>
<rect x="481.6" y="278.4" width="4.2" height="39.9" fill="#000"/>
<rect x="481.6" y="278.4" width="4.2" height="39.9" stroke="#ffff00" stroke-width="0.8" fill="none"/>
<rect x="481.6" y="278.4" width="4.2" height="2.2" fill="#ffff00"/>
<rect x="481.6" y="316" width="4.2" height="2.2" fill="#ffff00"/>
<rect x="442.4" y="335.3" width="5.2" height="27.4" fill="#000"/>
<rect x="442.4" y="335.3" width="5.2" height="27.4" stroke="#ffff00" stroke-width="0.8" fill="none"/>
<rect x="442.4" y="360.5" width="5.2" height="2.2" fill="#ffff00"/>
<rect x="442.4" y="334.3" width="5.2" height="1.7" fill="#e00000"/>
<rect x="478.3" y="334.5" width="5.7" height="22.5" fill="#000"/>
<rect x="478.3" y="334.5" width="5.7" height="22.5" stroke="#ffff00" stroke-width="0.8" fill="none"/>
<rect x="478.3" y="333.6" width="5.7" height="1.7" fill="#e00000"/>
<rect x="478.3" y="357" width="5.7" height="6" stroke="#7c007c" stroke-width="0.72" fill="none"/>
<rect x="412" y="331.3" width="20.6" height="21.1" fill="#000"/>
<rect x="412" y="331.3" width="20.6" height="21.3" stroke="#00c800" stroke-width="0.96" fill="none"/>
<path d="M412 331.3L432.6 352.4" stroke="#00ffff" stroke-width="0.72"/>
<path d="M412 352.4L432.6 331.3" stroke="#00ffff" stroke-width="0.72"/>
<rect x="419.4" y="326" width="5.8" height="37.8" stroke="#0020ff" stroke-width="1.12" fill="none"/>
<rect x="417.7" y="359" width="9.2" height="5.5" stroke="#0020ff" stroke-width="0.96" fill="none"/>
<rect x="420.8" y="325" width="3" height="6" fill="#0030ff"/>
<rect x="493.8" y="331.3" width="21" height="21.1" fill="#000"/>
<rect x="493.8" y="331.3" width="21" height="21.3" stroke="#00c800" stroke-width="0.96" fill="none"/>
<path d="M493.8 331.3L514.8 352.4" stroke="#00ffff" stroke-width="0.72"/>
<path d="M493.8 352.4L514.8 331.3" stroke="#00ffff" stroke-width="0.72"/>
<rect x="501.4" y="326" width="5.8" height="37.8" stroke="#0020ff" stroke-width="1.12" fill="none"/>
<rect x="499.7" y="359" width="9.2" height="5.5" stroke="#0020ff" stroke-width="0.96" fill="none"/>
<rect x="502.8" y="325" width="3" height="6" fill="#0030ff"/>
<path d="M369.7 293L369.7 343.3" stroke="#ffff00" stroke-width="0.8"/>
<path d="M368.6 293.9L388 293.9" stroke="#ffff00" stroke-width="0.8"/>
<path d="M368.6 297.3L430 297.3" stroke="#ffff00" stroke-width="0.8"/>
<path d="M368.6 304.6L398 304.6" stroke="#ffff00" stroke-width="0.8"/>
<path d="M368.6 311.2L398 311.2" stroke="#ffff00" stroke-width="0.8"/>
<path d="M368.6 317.9L443 317.9" stroke="#ffff00" stroke-width="0.8"/>
<path d="M368.6 322.2L443 322.2" stroke="#ffff00" stroke-width="0.8"/>
<path d="M368.6 325.4L405 325.4" stroke="#ffff00" stroke-width="0.8"/>
<path d="M368.6 328.6L412 328.6" stroke="#ffff00" stroke-width="0.8"/>
<path d="M368.6 333.6L412 333.6" stroke="#ffff00" stroke-width="0.8"/>
<path d="M368.6 343.3L388 343.3" stroke="#ffff00" stroke-width="0.8"/>
<path d="M367.6 296L369 296" stroke="#c0c000" stroke-width="1.2" stroke-dasharray="1 1"/>
<path d="M368.2 298L368.2 340" stroke="#c4c400" stroke-width="0.9" stroke-dasharray="2 6"/>
<path d="M380.7 307.4L399.9 307.4" stroke="#c0c000" stroke-width="1.76" stroke-dasharray="2 1"/>
<path d="M400 307.4 L406 307.4 L421 326" stroke="#ffff00" stroke-width="0.8" fill="none"/>
<path d="M373.8 315L389 315" stroke="#c0c000" stroke-width="1.6" stroke-dasharray="2 1"/>
<path d="M373.8 317.5L389 317.5" stroke="#c0c000" stroke-width="1.6" stroke-dasharray="3 1"/>
<path d="M389 315 L393 315 L408.5 325.3" stroke="#ffff00" stroke-width="0.8" fill="none"/>
<path d="M398.3 252.3L446.2 252.3" stroke="#c0c000" stroke-width="1.92" stroke-dasharray="2 0.8 3 0.8"/>
<path d="M425.7 253.5L442.8 279" stroke="#ffff00" stroke-width="0.8"/>
<circle cx="361.2" cy="248.7" r="3.8" stroke="#ffff00" stroke-width="0.88" fill="none"/>
<rect x="360.2" y="247.5" width="2" height="2.4" fill="#a0a000"/>
<path d="M364 251.5L390.7 275.6" stroke="#ffff00" stroke-width="0.8"/>
<circle cx="361.2" cy="361.1" r="3.8" stroke="#ffff00" stroke-width="0.88" fill="none"/>
<rect x="360.2" y="359.9" width="2" height="2.4" fill="#a0a000"/>
<path d="M365 360L411.3 339.8" stroke="#ffff00" stroke-width="0.8"/>
<path d="M420.7 317.9L430 317.9" stroke="#c0c000" stroke-width="1.6" stroke-dasharray="2 1"/>
<path d="M475 248.4L590 248.4" stroke="#c0c000" stroke-width="1.76" stroke-dasharray="2 0.8 3 0.8"/>
<path d="M508 252.2L549 252.2" stroke="#c0c000" stroke-width="1.76" stroke-dasharray="2 0.8 3 0.8"/>
<path d="M514.4 258.8L552.5 258.8" stroke="#c0c000" stroke-width="1.92" stroke-dasharray="2 0.8 3 0.8"/>
<path d="M508 247.6 L502.3 247.6 L482.8 279" stroke="#ffff00" stroke-width="0.8" fill="none"/>
<path d="M514.4 258 L488.6 300 M512.5 258 L485 296.6" stroke="#ffff00" stroke-width="0.8" fill="none"/>
<circle cx="565.6" cy="289.8" r="4.2" stroke="#ffff00" stroke-width="0.88" fill="none"/>
<rect x="564.6" y="288.6" width="2" height="2.4" fill="#a0a000"/>
<path d="M561.4 290.1L501 296.6" stroke="#ffff00" stroke-width="0.8"/>
<circle cx="565.6" cy="300" r="4.2" stroke="#ffff00" stroke-width="0.88" fill="none"/>
<rect x="564.6" y="298.8" width="2" height="2.4" fill="#a0a000"/>
<path d="M561.4 300.3L501 303.5" stroke="#ffff00" stroke-width="0.8"/>
<circle cx="565.6" cy="309.9" r="4.2" stroke="#ffff00" stroke-width="0.88" fill="none"/>
<rect x="564.6" y="308.7" width="2" height="2.4" fill="#a0a000"/>
<path d="M561.4 310.2L482.8 316" stroke="#ffff00" stroke-width="0.8"/>
<circle cx="565.6" cy="341" r="4.2" stroke="#ffff00" stroke-width="0.88" fill="none"/>
<rect x="564.6" y="339.8" width="2" height="2.4" fill="#a0a000"/>
<path d="M561.6 340L521.7 327.3" stroke="#ffff00" stroke-width="0.8"/>
<circle cx="565.6" cy="350.8" r="4.2" stroke="#ffff00" stroke-width="0.88" fill="none"/>
<rect x="564.6" y="349.6" width="2" height="2.4" fill="#a0a000"/>
<path d="M561.6 349.8L522.8 330.7" stroke="#ffff00" stroke-width="0.8"/>
<circle cx="565.6" cy="361.1" r="4.2" stroke="#ffff00" stroke-width="0.88" fill="none"/>
<rect x="564.6" y="359.9" width="2" height="2.4" fill="#a0a000"/>
<path d="M561.6 360.1L490.8 336.4" stroke="#ffff00" stroke-width="0.8"/>
<circle cx="565.6" cy="381" r="4.2" stroke="#ffff00" stroke-width="0.88" fill="none"/>
<rect x="564.6" y="379.8" width="2" height="2.4" fill="#a0a000"/>
<path d="M561.6 380L505.7 351.3" stroke="#ffff00" stroke-width="0.8"/>
<path d="M541 276 L585.2 276 L585.2 368.4 L553.7 368.4" stroke="#ffff00" stroke-width="0.8" fill="none"/>
<rect x="584.2" y="367.4" width="2.2" height="2.2" fill="#ffff00"/>
<rect x="584.2" y="275" width="2.2" height="2.2" fill="#ffff00"/>
<path d="M542 323.8L583 323.8" stroke="#c0c000" stroke-width="1.6" stroke-dasharray="2 0.8 3 0.8"/>
<path d="M542 327.5L583 327.5" stroke="#c0c000" stroke-width="1.6" stroke-dasharray="2 0.8 3 0.8"/>
<path d="M581 321.8L589 321.8" stroke="#c0c000" stroke-width="1.6" stroke-dasharray="2 1"/>
<path d="M460 370.5L460 386.6" stroke="#ffff00" stroke-width="0.8"/>
<path d="M465.4 370.5L465.4 379.3" stroke="#ffff00" stroke-width="0.8"/>
<rect x="458.8" y="385.4" width="2.4" height="2.4" fill="#ffff00"/>
<path d="M463 379L475 379" stroke="#c0c000" stroke-width="1.6" stroke-dasharray="2 1"/>
<path d="M462.5 386.6L470 386.6" stroke="#c0c000" stroke-width="1.6" stroke-dasharray="2 1"/>
<path d="M403.5 390.3L432.5 390.3" stroke="#c0c000" stroke-width="1.6" stroke-dasharray="2 0.8 3 0.8"/>
<path d="M403.5 393.3L432.5 393.3" stroke="#c0c000" stroke-width="1.6" stroke-dasharray="3 0.8 1 0.8"/>
<path d="M432.5 390.3 L434.8 390.3 L446.2 362.7" stroke="#ffff00" stroke-width="0.8" fill="none"/>
<path d="M440.5 390.5L502 390.5" stroke="#c0c000" stroke-width="1.6" stroke-dasharray="2 0.8 3 0.8"/>
<path d="M440.5 393.5L502 393.5" stroke="#c0c000" stroke-width="1.6" stroke-dasharray="3 0.8 2 0.8"/>
<path d="M509 390.5L572 390.5" stroke="#c0c000" stroke-width="1.6" stroke-dasharray="2 0.8 3 0.8"/>
<path d="M509 393L572 393" stroke="#c0c000" stroke-width="1.28" stroke-dasharray="3 0.8 2 0.8"/>
<path d="M509 390.3 L506.5 390.3 L502.3 363.8" stroke="#ffff00" stroke-width="0.8" fill="none"/>
<path d="M501 402.3L549 402.3" stroke="#c0c000" stroke-width="1.6" stroke-dasharray="2 0.8 3 0.8"/>
<path d="M501 405.8L549 405.8" stroke="#c0c000" stroke-width="1.6" stroke-dasharray="3 0.8 2 0.8"/>
<path d="M501 402.3 L497.7 402.3 L479.4 361.5" stroke="#ffff00" stroke-width="0.8" fill="none"/>
<path d="M514.4 353.5L514.4 375.5" stroke="#ffff00" stroke-width="0.8"/>
<path d="M514.4 375.5L519 375.5" stroke="#ffff00" stroke-width="0.8"/>
<path d="M519 375.5L526 375.5" stroke="#c0c000" stroke-width="1.6" stroke-dasharray="2 1"/>
<text x="431.6" y="406.6" font-size="5" fill="#e0e0e0" font-weight="normal" textLength="31.5" lengthAdjust="spacingAndGlyphs">SECTION A-A</text>
<rect x="431" y="407.2" width="33" height="1.2" fill="#e0e0e0"/>
<rect x="594.2" y="276.1" width="130.9" height="17.1" fill="url(#h1)"/>
<rect x="640.5" y="253.3" width="17.2" height="22.8" fill="url(#h1)"/>
<rect x="617.2" y="293.2" width="67" height="16.1" fill="url(#h2)"/>
<rect x="617.2" y="309.3" width="67" height="16" fill="url(#h2b)"/>
<rect x="604.7" y="325.6" width="29.3" height="6.2" fill="url(#h3)"/>
<rect x="664.6" y="325.6" width="23.9" height="6.2" fill="url(#h3)"/>
<rect x="634" y="325.6" width="30.6" height="6.2" fill="url(#h1)"/>
<rect x="617.7" y="331.8" width="66.9" height="11.5" fill="url(#h3)"/>
<rect x="594.2" y="343.3" width="117.2" height="26.2" fill="url(#h1)"/>
<rect x="711.4" y="359.2" width="13.7" height="10.3" fill="url(#h1)"/>
<rect x="594.2" y="276.1" width="130.9" height="17.1" stroke="#7c007c" stroke-width="0.72" fill="none"/>
<rect x="640.5" y="253.3" width="17.2" height="22.8" stroke="#7c007c" stroke-width="0.72" fill="none"/>
<rect x="604.7" y="325.6" width="29.3" height="6.2" stroke="#7c007c" stroke-width="0.72" fill="none"/>
<rect x="664.6" y="325.6" width="23.9" height="6.2" stroke="#7c007c" stroke-width="0.72" fill="none"/>
<path d="M594.2 343.3 L711.4 343.3 L711.4 356 Q711.4 359.2 714.6 359.2 L725.1 359.2 L725.1 369.5 L594.2 369.5 Z" stroke="#7c007c" stroke-width="0.72" fill="none"/>
<rect x="618.2" y="294.2" width="65.1" height="30.1" stroke="#00cccc" stroke-width="1.6" fill="none"/>
<path d="M695.4 276.1 L695.4 269 Q695.4 265.8 698.6 265.8 L708.2 265.8 Q711.4 265.8 711.4 269 L711.4 343.3" stroke="#7c007c" stroke-width="0.72" fill="none"/>
<path d="M695.4 293.2L695.4 343.3" stroke="#7c007c" stroke-width="0.72"/>
<path d="M697.7 293.2L697.7 300" stroke="#7c007c" stroke-width="0.72"/>
<path d="M711.4 343.3 L725.1 343.3 L725.1 359.2" stroke="#7c007c" stroke-width="0.72" fill="none"/>
<path d="M704.5 256.7L704.5 376.4" stroke="#00ffff" stroke-width="0.8"/>
<path d="M612 332L612 342" stroke="#0020ff" stroke-width="0.8"/>
<path d="M682 332L682 342" stroke="#0020ff" stroke-width="0.8"/>
<path d="M644 244.1L656.5 244.1" stroke="#00ffff" stroke-width="0.96"/>
<rect x="647" y="244.5" width="4.6" height="55.5" fill="#b43008"/>
<path d="M649.3 246L649.3 299" stroke="#700000" stroke-width="0.64"/>
<rect x="644" y="299.8" width="14.6" height="4.8" stroke="#d03000" stroke-width="0.96" fill="#000"/>
<rect x="639.9" y="305" width="2.9" height="64.5" fill="#000"/>
<path d="M639.9 300L639.9 369.5" stroke="#900000" stroke-width="0.64"/>
<path d="M642.8 300L642.8 369.5" stroke="#7c007c" stroke-width="0.64"/>
<rect x="649.7" y="326" width="8" height="43.5" fill="#000"/>
<path d="M649.7 326L649.7 369.5" stroke="#7c007c" stroke-width="0.64"/>
<path d="M657.7 326L657.7 369.5" stroke="#7c007c" stroke-width="0.64"/>
<rect x="639.4" y="299" width="3.9" height="2" fill="#e00000"/>
<rect x="660" y="312" width="10" height="12" fill="#000"/>
<rect x="660" y="312" width="10" height="12" stroke="#b05030" stroke-width="0.72" fill="none"/>
<rect x="662" y="315" width="6.5" height="8" fill="url(#h2)"/>
<rect x="644" y="310" width="5" height="12" fill="#000"/>
<path d="M627.5 268.8L627.5 281.8" stroke="#00ffff" stroke-width="0.8"/>
<rect x="625.2" y="281.8" width="4.6" height="42.5" fill="#000"/>
<rect x="625.2" y="281.8" width="4.6" height="42.5" stroke="#ffff00" stroke-width="0.8" fill="none"/>
<rect x="625.2" y="281.8" width="4.6" height="2" fill="#ffff00"/>
<rect x="625.2" y="301.5" width="4.6" height="2" fill="#ffff00"/>
<rect x="625.2" y="313.5" width="4.6" height="2" fill="#ffff00"/>
<rect x="673.7" y="279.5" width="4.5" height="40" fill="#000"/>
<rect x="673.7" y="279.5" width="4.5" height="40" stroke="#ffff00" stroke-width="0.8" fill="none"/>
<rect x="673.7" y="279.5" width="4.5" height="2" fill="#ffff00"/>
<rect x="671.4" y="319.5" width="8" height="4.8" fill="#000"/>
<rect x="671.4" y="319.5" width="8" height="4.8" stroke="#ffff00" stroke-width="0.8" fill="none"/>
<rect x="671.4" y="322" width="8" height="2" fill="#ffff00"/>
<rect x="624.6" y="335.3" width="5.2" height="31.9" fill="#000"/>
<rect x="624.6" y="335.3" width="5.2" height="31.9" stroke="#ffff00" stroke-width="0.8" fill="none"/>
<rect x="624.6" y="365" width="5.2" height="2" fill="#ffff00"/>
<rect x="624.6" y="334" width="5.2" height="1.8" fill="#e00000"/>
<rect x="671.4" y="354.7" width="8" height="14.8" fill="#000"/>
<path d="M671.4 354.7L671.4 369.5" stroke="#7c007c" stroke-width="0.64"/>
<path d="M679.4 354.7L679.4 369.5" stroke="#7c007c" stroke-width="0.64"/>
<rect x="673.2" y="335.3" width="4.6" height="19.4" fill="#000"/>
<rect x="673.2" y="335.3" width="4.6" height="19.4" stroke="#ffff00" stroke-width="0.8" fill="none"/>
<rect x="673.2" y="334" width="4.6" height="1.8" fill="#e00000"/>
<rect x="671.4" y="358.8" width="8" height="3.9" fill="#000"/>
<rect x="671.4" y="358.8" width="8" height="3.9" stroke="#ffff00" stroke-width="0.8" fill="none"/>
<circle cx="604.7" cy="247.6" r="4.2" stroke="#ffff00" stroke-width="0.88" fill="none"/>
<rect x="603.7" y="246.4" width="2" height="2.4" fill="#a0a000"/>
<path d="M605.5 252 L626.8 289.8 M606.5 251.6 L628 310.3" stroke="#ffff00" stroke-width="0.8" fill="none"/>
<path d="M580 248.4L600 248.4" stroke="#c0c000" stroke-width="1.76" stroke-dasharray="2 0.8 3 0.8"/>
<path d="M609.5 248.4L614 248.4" stroke="#c0c000" stroke-width="1.76" stroke-dasharray="2 0.8"/>
<circle cx="686.2" cy="246.9" r="4.2" stroke="#ffff00" stroke-width="0.88" fill="none"/>
<rect x="685.2" y="245.7" width="2" height="2.4" fill="#a0a000"/>
<circle cx="696.5" cy="246.9" r="4.2" stroke="#ffff00" stroke-width="0.88" fill="none"/>
<rect x="695.5" y="245.7" width="2" height="2.4" fill="#a0a000"/>
<path d="M682.5 249L649.7 268.8" stroke="#ffff00" stroke-width="0.8"/>
<path d="M694.5 250.6L677.1 281.8" stroke="#ffff00" stroke-width="0.8"/>
<path d="M680.5 242.2L720.5 242.2" stroke="#c0c000" stroke-width="1.6" stroke-dasharray="2 0.8 3 0.8"/>
<circle cx="594.2" cy="319" r="4.2" stroke="#ffff00" stroke-width="0.88" fill="none"/>
<rect x="593.2" y="317.8" width="2" height="2.4" fill="#a0a000"/>
<path d="M598.5 318.6L626.8 315.4" stroke="#ffff00" stroke-width="0.8"/>
<circle cx="594.2" cy="390.8" r="4" stroke="#ffff00" stroke-width="0.88" fill="none"/>
<rect x="593.2" y="389.6" width="2" height="2.4" fill="#a0a000"/>
<path d="M597 388L627.5 359.2" stroke="#ffff00" stroke-width="0.8"/>
<path d="M630 375.6L677 375.6" stroke="#c0c000" stroke-width="2.08" stroke-dasharray="2 0.8 3 0.8"/>
<path d="M640.5 369.5L640.5 376" stroke="#ffff00" stroke-width="0.8"/>
<path d="M642.8 369.5L642.8 376" stroke="#ffff00" stroke-width="0.8"/>
<path d="M649.7 369.5L649.7 376" stroke="#ffff00" stroke-width="0.8"/>
<path d="M657.7 369.5L657.7 376" stroke="#ffff00" stroke-width="0.8"/>
<path d="M580 368.4L585.2 368.4" stroke="#ffff00" stroke-width="0.8"/>
<text x="640.7" y="406.6" font-size="5" fill="#e0e0e0" font-weight="normal" textLength="28.4" lengthAdjust="spacingAndGlyphs">SECTION B-B</text>
<rect x="639" y="407.2" width="32.8" height="1.2" fill="#e0e0e0"/>
<path d="M760.7 67.74L825.6 67.74" stroke="#ff0000" stroke-width="0.96"/>
<path d="M760.7 70.48L825.6 70.48" stroke="#ff0000" stroke-width="0.96"/>
<path d="M760.7 73.22L825.6 73.22" stroke="#ff0000" stroke-width="0.96"/>
<path d="M760.7 75.96L825.6 75.96" stroke="#ff0000" stroke-width="0.96"/>
<path d="M760.7 78.7L825.6 78.7" stroke="#ff0000" stroke-width="0.96"/>
<path d="M760.7 81.44L825.6 81.44" stroke="#ff0000" stroke-width="0.96"/>
<path d="M760.7 84.18L825.6 84.18" stroke="#ff0000" stroke-width="0.96"/>
<path d="M760.7 86.92L825.6 86.92" stroke="#ff0000" stroke-width="0.96"/>
<path d="M760.7 89.66L825.6 89.66" stroke="#ff0000" stroke-width="0.96"/>
<path d="M760.7 92.4L825.6 92.4" stroke="#ff0000" stroke-width="0.96"/>
<path d="M760.7 95.14L825.6 95.14" stroke="#ff0000" stroke-width="0.96"/>
<path d="M760.7 97.88L825.6 97.88" stroke="#ff0000" stroke-width="0.96"/>
<path d="M760.7 100.62L825.6 100.62" stroke="#ff0000" stroke-width="0.96"/>
<path d="M760.7 103.36L825.6 103.36" stroke="#ff0000" stroke-width="0.96"/>
<path d="M760.7 106.1L825.6 106.1" stroke="#ff0000" stroke-width="0.96"/>
<path d="M760.7 108.84L825.6 108.84" stroke="#ff0000" stroke-width="0.96"/>
<path d="M760.7 111.58L825.6 111.58" stroke="#ff0000" stroke-width="0.96"/>
<path d="M760.7 65L760.7 111.6" stroke="#ff0000" stroke-width="1"/>
<path d="M766.3 65L766.3 111.6" stroke="#ff0000" stroke-width="1"/>
<path d="M781.8 65L781.8 111.6" stroke="#ff0000" stroke-width="1"/>
<path d="M787.9 65L787.9 111.6" stroke="#ff0000" stroke-width="1"/>
<path d="M804.6 65L804.6 111.6" stroke="#ff0000" stroke-width="1"/>
<path d="M808 65L808 111.6" stroke="#ff0000" stroke-width="1"/>
<path d="M761.8 66.4L764.8 66.4" stroke="#c0c000" stroke-width="1.52" stroke-dasharray="1.3 0.6"/>
<path d="M767 66.4L781 66.4" stroke="#c0c000" stroke-width="1.6" stroke-dasharray="2 0.6 3 0.6"/>
<path d="M783.4 66.4L786 66.4" stroke="#c0c000" stroke-width="1.44" stroke-dasharray="1.3 0.6"/>
<path d="M792 66.4L798 66.4" stroke="#c0c000" stroke-width="1.6" stroke-dasharray="2 0.6 3 0.6"/>
<path d="M809 66.4L814 66.4" stroke="#c0c000" stroke-width="1.6" stroke-dasharray="2 0.6 3 0.6"/>
<path d="M805.6 66.4L807 66.4" stroke="#c0c000" stroke-width="1.04" stroke-dasharray="1 0.6"/>
<path d="M761.8 69.14L764.8 69.14" stroke="#c0c000" stroke-width="1.2" stroke-dasharray="1.3 0.6"/>
<path d="M767 69.14L771 69.14" stroke="#c0c000" stroke-width="1.6" stroke-dasharray="2 0.6 3 0.6"/>
<path d="M783.4 69.14L786 69.14" stroke="#c0c000" stroke-width="1.44" stroke-dasharray="1.3 0.6"/>
<path d="M809.5 69.14L813.5 69.14" stroke="#c0c000" stroke-width="1.6" stroke-dasharray="2 0.6 3 0.6"/>
<path d="M805.6 69.14L807 69.14" stroke="#c0c000" stroke-width="1.04" stroke-dasharray="1 0.6"/>
<path d="M761.8 71.88L764.8 71.88" stroke="#c0c000" stroke-width="1.2" stroke-dasharray="1.3 0.6"/>
<path d="M767 71.88L774 71.88" stroke="#c0c000" stroke-width="1.6" stroke-dasharray="2 0.6 3 0.6"/>
<path d="M790 71.88L797 71.88" stroke="#c0c000" stroke-width="1.6" stroke-dasharray="2 0.6 3 0.6"/>
<path d="M809 71.88L817 71.88" stroke="#c0c000" stroke-width="1.6" stroke-dasharray="2 0.6 3 0.6"/>
<path d="M805.6 71.88L807 71.88" stroke="#c0c000" stroke-width="1.04" stroke-dasharray="1 0.6"/>
<path d="M761.8 74.62L764.8 74.62" stroke="#c0c000" stroke-width="1.2" stroke-dasharray="1.3 0.6"/>
<path d="M767 74.62L773 74.62" stroke="#c0c000" stroke-width="1.6" stroke-dasharray="2 0.6 3 0.6"/>
<path d="M783.4 74.62L786 74.62" stroke="#c0c000" stroke-width="1.44" stroke-dasharray="1.3 0.6"/>
<path d="M789 74.62L800 74.62" stroke="#c0c000" stroke-width="1.6" stroke-dasharray="2 0.6 3 0.6"/>
<path d="M809 74.62L820 74.62" stroke="#c0c000" stroke-width="1.6" stroke-dasharray="2 0.6 3 0.6"/>
<path d="M805.6 74.62L807 74.62" stroke="#c0c000" stroke-width="1.04" stroke-dasharray="1 0.6"/>
<path d="M761.8 77.36L764.8 77.36" stroke="#c0c000" stroke-width="1.2" stroke-dasharray="1.3 0.6"/>
<path d="M767 77.36L773 77.36" stroke="#c0c000" stroke-width="1.6" stroke-dasharray="2 0.6 3 0.6"/>
<path d="M783.4 77.36L786 77.36" stroke="#c0c000" stroke-width="1.44" stroke-dasharray="1.3 0.6"/>
<path d="M789 77.36L800 77.36" stroke="#c0c000" stroke-width="1.6" stroke-dasharray="2 0.6 3 0.6"/>
<path d="M809 77.36L818 77.36" stroke="#c0c000" stroke-width="1.6" stroke-dasharray="2 0.6 3 0.6"/>
<path d="M805.6 77.36L807 77.36" stroke="#c0c000" stroke-width="1.04" stroke-dasharray="1 0.6"/>
<path d="M761.8 80.1L764.8 80.1" stroke="#c0c000" stroke-width="1.2" stroke-dasharray="1.3 0.6"/>
<path d="M767 80.1L776 80.1" stroke="#c0c000" stroke-width="1.6" stroke-dasharray="2 0.6 3 0.6"/>
<path d="M791 80.1L799 80.1" stroke="#c0c000" stroke-width="1.6" stroke-dasharray="2 0.6 3 0.6"/>
<path d="M809 80.1L820 80.1" stroke="#c0c000" stroke-width="1.6" stroke-dasharray="2 0.6 3 0.6"/>
<path d="M805.6 80.1L807 80.1" stroke="#c0c000" stroke-width="1.04" stroke-dasharray="1 0.6"/>
<path d="M761.8 82.84L764.8 82.84" stroke="#c0c000" stroke-width="1.2" stroke-dasharray="1.3 0.6"/>
<path d="M767 82.84L775 82.84" stroke="#c0c000" stroke-width="1.6" stroke-dasharray="2 0.6 3 0.6"/>
<path d="M783.4 82.84L786 82.84" stroke="#c0c000" stroke-width="1.44" stroke-dasharray="1.3 0.6"/>
<path d="M789 82.84L800 82.84" stroke="#c0c000" stroke-width="1.6" stroke-dasharray="2 0.6 3 0.6"/>
<path d="M809 82.84L820 82.84" stroke="#c0c000" stroke-width="1.6" stroke-dasharray="2 0.6 3 0.6"/>
<path d="M805.6 82.84L807 82.84" stroke="#c0c000" stroke-width="1.04" stroke-dasharray="1 0.6"/>
<path d="M761.8 85.58L764.8 85.58" stroke="#c0c000" stroke-width="1.2" stroke-dasharray="1.3 0.6"/>
<path d="M767 85.58L775 85.58" stroke="#c0c000" stroke-width="1.6" stroke-dasharray="2 0.6 3 0.6"/>
<path d="M783.4 85.58L786 85.58" stroke="#c0c000" stroke-width="1.44" stroke-dasharray="1.3 0.6"/>
<path d="M790 85.58L800 85.58" stroke="#c0c000" stroke-width="1.6" stroke-dasharray="2 0.6 3 0.6"/>
<path d="M809 85.58L817 85.58" stroke="#c0c000" stroke-width="1.6" stroke-dasharray="2 0.6 3 0.6"/>
<path d="M805.6 85.58L807 85.58" stroke="#c0c000" stroke-width="1.04" stroke-dasharray="1 0.6"/>
<path d="M761.8 88.32L764.8 88.32" stroke="#c0c000" stroke-width="1.2" stroke-dasharray="1.3 0.6"/>
<path d="M767 88.32L781 88.32" stroke="#c0c000" stroke-width="1.6" stroke-dasharray="2 0.6 3 0.6"/>
<path d="M783.4 88.32L786 88.32" stroke="#c0c000" stroke-width="1.44" stroke-dasharray="1.3 0.6"/>
<path d="M791 88.32L799 88.32" stroke="#c0c000" stroke-width="1.6" stroke-dasharray="2 0.6 3 0.6"/>
<path d="M805.6 88.32L807 88.32" stroke="#c0c000" stroke-width="1.04" stroke-dasharray="1 0.6"/>
<path d="M761.8 91.06L764.8 91.06" stroke="#c0c000" stroke-width="1.2" stroke-dasharray="1.3 0.6"/>
<path d="M767 91.06L770 91.06" stroke="#c0c000" stroke-width="1.6" stroke-dasharray="2 0.6 3 0.6"/>
<path d="M790 91.06L798 91.06" stroke="#c0c000" stroke-width="1.6" stroke-dasharray="2 0.6 3 0.6"/>
<path d="M805.6 91.06L807 91.06" stroke="#c0c000" stroke-width="1.04" stroke-dasharray="1 0.6"/>
<path d="M761.8 93.8L764.8 93.8" stroke="#c0c000" stroke-width="1.52" stroke-dasharray="1.3 0.6"/>
<path d="M767 93.8L769.5 93.8" stroke="#c0c000" stroke-width="1.6" stroke-dasharray="2 0.6 3 0.6"/>
<path d="M782.8 93.8L787 93.8" stroke="#c0c000" stroke-width="1.76" stroke-dasharray="1.8 0.5"/>
<path d="M791 93.8L798 93.8" stroke="#c0c000" stroke-width="1.6" stroke-dasharray="2 0.6 3 0.6"/>
<path d="M805.6 93.8L807 93.8" stroke="#c0c000" stroke-width="1.04" stroke-dasharray="1 0.6"/>
<path d="M761.8 96.54L764.8 96.54" stroke="#c0c000" stroke-width="1.52" stroke-dasharray="1.3 0.6"/>
<path d="M767 96.54L769.5 96.54" stroke="#c0c000" stroke-width="1.6" stroke-dasharray="2 0.6 3 0.6"/>
<path d="M782.8 96.54L787 96.54" stroke="#c0c000" stroke-width="1.76" stroke-dasharray="1.8 0.5"/>
<path d="M791 96.54L798 96.54" stroke="#c0c000" stroke-width="1.6" stroke-dasharray="2 0.6 3 0.6"/>
<path d="M805.6 96.54L807 96.54" stroke="#c0c000" stroke-width="1.04" stroke-dasharray="1 0.6"/>
<path d="M761.8 99.28L764.8 99.28" stroke="#c0c000" stroke-width="1.2" stroke-dasharray="1.3 0.6"/>
<path d="M767 99.28L774 99.28" stroke="#c0c000" stroke-width="1.6" stroke-dasharray="2 0.6 3 0.6"/>
<path d="M783.4 99.28L786 99.28" stroke="#c0c000" stroke-width="1.44" stroke-dasharray="1.3 0.6"/>
<path d="M790 99.28L800 99.28" stroke="#c0c000" stroke-width="1.6" stroke-dasharray="2 0.6 3 0.6"/>
<path d="M809 99.28L817 99.28" stroke="#c0c000" stroke-width="1.6" stroke-dasharray="2 0.6 3 0.6"/>
<path d="M805.6 99.28L807 99.28" stroke="#c0c000" stroke-width="1.04" stroke-dasharray="1 0.6"/>
<path d="M761.8 102.02L764.8 102.02" stroke="#c0c000" stroke-width="1.2" stroke-dasharray="1.3 0.6"/>
<path d="M767 102.02L781 102.02" stroke="#c0c000" stroke-width="1.6" stroke-dasharray="2 0.6 3 0.6"/>
<path d="M783.4 102.02L786 102.02" stroke="#c0c000" stroke-width="1.44" stroke-dasharray="1.3 0.6"/>
<path d="M809 102.02L820 102.02" stroke="#c0c000" stroke-width="1.6" stroke-dasharray="2 0.6 3 0.6"/>
<path d="M761.8 104.76L764.8 104.76" stroke="#c0c000" stroke-width="1.2" stroke-dasharray="1.3 0.6"/>
<path d="M767 104.76L776 104.76" stroke="#c0c000" stroke-width="1.6" stroke-dasharray="2 0.6 3 0.6"/>
<path d="M790 104.76L799 104.76" stroke="#c0c000" stroke-width="1.6" stroke-dasharray="2 0.6 3 0.6"/>
<path d="M761.8 107.5L764.8 107.5" stroke="#c0c000" stroke-width="1.2" stroke-dasharray="1.3 0.6"/>
<path d="M761.8 110.24L764.8 110.24" stroke="#c0c000" stroke-width="1.2" stroke-dasharray="1.3 0.6"/>
<rect x="774.7" y="317.2" width="50.9" height="98.4" stroke="#ff0000" stroke-width="0.8" fill="none"/>
<path d="M774.7 371.3L825.6 371.3" stroke="#ff0000" stroke-width="0.8"/>
<path d="M774.7 375.2L825.6 375.2" stroke="#ff0000" stroke-width="0.8"/>
<path d="M774.7 379.1L825.6 379.1" stroke="#ff0000" stroke-width="0.8"/>
<path d="M774.7 382.8L825.6 382.8" stroke="#ff0000" stroke-width="0.8"/>
<path d="M774.7 386.2L825.6 386.2" stroke="#ff0000" stroke-width="0.8"/>
<path d="M774.7 390.5L825.6 390.5" stroke="#ff0000" stroke-width="0.8"/>
<path d="M774.7 399.9L825.6 399.9" stroke="#ff0000" stroke-width="0.8"/>
<path d="M774.7 404.9L825.6 404.9" stroke="#ff0000" stroke-width="0.8"/>
<path d="M774.7 409.9L825.6 409.9" stroke="#ff0000" stroke-width="0.8"/>
<path d="M781.5 371.3L781.5 390.5" stroke="#ff0000" stroke-width="0.8"/>
<path d="M807.3 371.3L807.3 415.6" stroke="#ff0000" stroke-width="0.8"/>
<path d="M816.4 371.3L816.4 390.5" stroke="#ff0000" stroke-width="0.8"/>
<path d="M816.4 399.9L816.4 415.6" stroke="#ff0000" stroke-width="0.8"/>
<path d="M816.4 415.6L825.6 404.9" stroke="#ff0000" stroke-width="0.8"/>
<path d="M777.5 321.6L792 321.6" stroke="#c0c000" stroke-width="1.76" stroke-dasharray="3 0.8 2 0.8 4 1.4"/>
<path d="M777.5 324.9L804 324.9" stroke="#c0c000" stroke-width="1.76" stroke-dasharray="3 0.8 2 0.8 4 1.4"/>
<path d="M777.5 328.3L806 328.3" stroke="#c0c000" stroke-width="1.76" stroke-dasharray="3 0.8 2 0.8 4 1.4"/>
<path d="M777.5 331.8L806 331.8" stroke="#c0c000" stroke-width="1.76" stroke-dasharray="3 0.8 2 0.8 4 1.4"/>
<path d="M777.5 335.2L800 335.2" stroke="#c0c000" stroke-width="1.76" stroke-dasharray="3 0.8 2 0.8 4 1.4"/>
<path d="M777.5 338.7L801 338.7" stroke="#c0c000" stroke-width="1.76" stroke-dasharray="3 0.8 2 0.8 4 1.4"/>
<path d="M777.5 342.2L806 342.2" stroke="#c0c000" stroke-width="1.76" stroke-dasharray="3 0.8 2 0.8 4 1.4"/>
<path d="M777.5 345.6L794 345.6" stroke="#c0c000" stroke-width="1.76" stroke-dasharray="3 0.8 2 0.8 4 1.4"/>
<path d="M777.5 349L807 349" stroke="#c0c000" stroke-width="1.76" stroke-dasharray="3 0.8 2 0.8 4 1.4"/>
<path d="M784 352.5L812 352.5" stroke="#c0c000" stroke-width="1.76" stroke-dasharray="3 0.8 2 0.8 4 1.4"/>
<path d="M777.5 356L800 356" stroke="#c0c000" stroke-width="1.76" stroke-dasharray="3 0.8 2 0.8 4 1.4"/>
<path d="M777.5 359.6L810 359.6" stroke="#c0c000" stroke-width="1.76" stroke-dasharray="3 0.8 2 0.8 4 1.4"/>
<path d="M777 373.2L779 373.2" stroke="#a0a000" stroke-width="0.96" stroke-dasharray="1 1"/>
<path d="M791 373.2L796 373.2" stroke="#a0a000" stroke-width="0.96" stroke-dasharray="2 1"/>
<path d="M810 373.2L813 373.2" stroke="#a0a000" stroke-width="0.96" stroke-dasharray="1 1"/>
<path d="M777 377.1L779 377.1" stroke="#a0a000" stroke-width="0.96" stroke-dasharray="1 1"/>
<path d="M791 377.1L796 377.1" stroke="#a0a000" stroke-width="0.96" stroke-dasharray="2 1"/>
<path d="M810 377.1L813 377.1" stroke="#a0a000" stroke-width="0.96" stroke-dasharray="1 1"/>
<path d="M777 381L779 381" stroke="#a0a000" stroke-width="0.96" stroke-dasharray="1 1"/>
<path d="M791 381L796 381" stroke="#a0a000" stroke-width="0.96" stroke-dasharray="2 1"/>
<path d="M810 381L813 381" stroke="#a0a000" stroke-width="0.96" stroke-dasharray="1 1"/>
<path d="M777 384.5L779 384.5" stroke="#a0a000" stroke-width="0.96" stroke-dasharray="1 1"/>
<path d="M791 384.5L796 384.5" stroke="#a0a000" stroke-width="0.96" stroke-dasharray="2 1"/>
<path d="M810 384.5L813 384.5" stroke="#a0a000" stroke-width="0.96" stroke-dasharray="1 1"/>
<path d="M776 388.4L780 388.4" stroke="#c0c000" stroke-width="1.6" stroke-dasharray="2 0.6"/>
<path d="M790 388.4L799 388.4" stroke="#c0c000" stroke-width="1.6" stroke-dasharray="2 0.6"/>
<path d="M810 388.4L814 388.4" stroke="#c0c000" stroke-width="1.6" stroke-dasharray="2 0.6"/>
<path d="M819.5 388.4L822 388.4" stroke="#c0c000" stroke-width="1.6" stroke-dasharray="1.5 0.6"/>
<path d="M776 392.5L779 392.5" stroke="#c0c000" stroke-width="1.28" stroke-dasharray="1.5 0.6"/>
<path d="M808.5 392.5L812 392.5" stroke="#c0c000" stroke-width="1.28" stroke-dasharray="1.5 0.6"/>
<path d="M776 401.8L780 401.8" stroke="#c0c000" stroke-width="1.28" stroke-dasharray="2 0.6"/>
<path d="M808.5 401.8L813 401.8" stroke="#c0c000" stroke-width="1.28" stroke-dasharray="2 0.6"/>
<path d="M817.5 401.8L822 401.8" stroke="#c0c000" stroke-width="1.28" stroke-dasharray="2 0.6"/>
<path d="M776 406.7L780 406.7" stroke="#c0c000" stroke-width="1.28" stroke-dasharray="2 0.6"/>
<path d="M785 404.2L796 404.2" stroke="#c0c000" stroke-width="1.28" stroke-dasharray="2 0.6"/>
<path d="M808.5 406.7L813 406.7" stroke="#c0c000" stroke-width="1.28" stroke-dasharray="2 0.6"/>
<path d="M776 411.5L782 411.5" stroke="#c0c000" stroke-width="1.28" stroke-dasharray="2 0.6"/>
<path d="M808.5 411.5L812 411.5" stroke="#c0c000" stroke-width="1.28" stroke-dasharray="2 0.6"/>
<rect x="817.5" y="407" width="3" height="2.5" fill="#006000"/>
<rect x="821" y="411" width="3" height="2" fill="#006000"/>
<rect x="736" y="391.4" width="38.7" height="24" stroke="#00f000" stroke-width="0.8" fill="none"/>
<path d="M737 392.6L744 392.6" stroke="#c0c000" stroke-width="1.12" stroke-dasharray="2 0.6"/>
<path d="M738.5 397.6L768 397.6" stroke="#c0c000" stroke-width="1.28" stroke-dasharray="2 0.6 3 0.6"/>
<path d="M738.5 400L754 400" stroke="#c0c000" stroke-width="1.28" stroke-dasharray="2 0.6 3 0.6"/>
<path d="M738.5 402.2L756 402.2" stroke="#c0c000" stroke-width="1.28" stroke-dasharray="2 0.6 3 0.6"/>
<path d="M738.5 404.4L756 404.4" stroke="#c0c000" stroke-width="1.28" stroke-dasharray="2 0.6 3 0.6"/>
<path d="M738.5 406.6L757 406.6" stroke="#c0c000" stroke-width="1.28" stroke-dasharray="2 0.6 3 0.6"/>
<path d="M738.5 408.8L752 408.8" stroke="#c0c000" stroke-width="1.28" stroke-dasharray="2 0.6 3 0.6"/>
<path d="M716.5 410.6L732 410.6" stroke="#00ffff" stroke-width="0.96"/>
<path d="M719.5 407.5L719.5 413.7" stroke="#00ffff" stroke-width="0.96"/>
<path d="M723.5 409.3 L730.5 408.8 L730.5 412.4 L723.5 411.9 Z" stroke="#e02000" stroke-width="0.8" fill="none"/></svg>
<!-- scrollbar -->
<div class="a" style="left:1015px;top:49px;width:9px;height:385px;background:#ebe9e4"></div>
<div class="a" style="left:1015px;top:98px;width:9px;height:324px;background:#d4d0c8;box-shadow:inset 1px 1px 0 #fff,inset -1px -1px 0 #808080"></div>
<div class="a" style="left:1015px;top:49px;width:9px;height:12px;background:#d4d0c8;box-shadow:inset 1px 1px 0 #fff,inset 0 -1px 0 #808080"></div>
<div class="a" style="left:1015px;top:422px;width:9px;height:12px;background:#d4d0c8;box-shadow:inset 1px 1px 0 #fff,inset 0 -1px 0 #808080"></div>
<svg class="a" style="left:1015px;top:49px" width="9" height="385" viewBox="0 0 9 385"><path d="M2.4 8.2L5.2 4.6L8 8.2Z" fill="#000"/><path d="M2.4 376.8L5.2 380.4L8 376.8Z" fill="#000"/></svg>
</body></html>
